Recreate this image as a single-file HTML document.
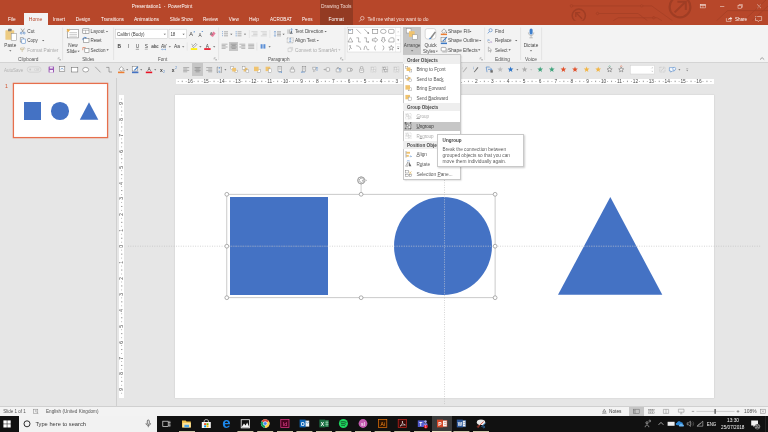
<!DOCTYPE html>
<html lang="en"><head><meta charset="utf-8"><title>Presentation1 - PowerPoint</title>
<style>
html,body{margin:0;padding:0;background:#e6e6e6;}
#app{position:relative;width:768px;height:432px;overflow:hidden;background:#e6e6e6;font-family:"Liberation Sans",sans-serif;}
#app div{position:absolute;box-sizing:border-box;}
#app span{position:absolute;white-space:pre;display:block;}
#app svg{position:absolute;left:0;top:0;width:768px;height:432px;overflow:visible;}
#app svg text{font-family:"Liberation Sans",sans-serif;}
u{text-decoration-thickness:0.3px;text-underline-offset:0.3px;text-decoration-color:rgba(90,90,90,0.55);}
</style></head><body><div id="app">

<section style="position:absolute;left:0;top:0;width:768px;height:432px;z-index:1;will-change:transform;">
<div style="left:0px;top:0px;width:768px;height:25px;background:#B7472A;"></div>
<div style="left:319.5px;top:0px;width:33.5px;height:25px;background:#933B23;"></div>
<div style="left:24px;top:13px;width:23.5px;height:12px;background:#F3F3F3;"></div>
<div style="left:0px;top:25px;width:768px;height:37px;background:#F3F3F3;"></div>
<div style="left:0px;top:62px;width:768px;height:15px;background:#E6E6E6;"></div>
<div style="left:0px;top:61.6px;width:768px;height:0.6px;background:#D4D4D4;"></div>
<div style="left:0px;top:77px;width:768px;height:330px;background:#E6E6E6;"></div>
<div style="left:116.3px;top:77.5px;width:0.7px;height:329px;background:#CFCFCF;"></div>
<div style="left:0px;top:406.4px;width:768px;height:0.6px;background:#D0D0D0;"></div>
<div style="left:0px;top:407px;width:768px;height:9px;background:#F3F3F3;"></div>
<div style="left:0px;top:416px;width:768px;height:16px;background:#111111;"></div>
<div style="left:19px;top:416px;width:138px;height:16px;background:#F2F2F2;"></div>
<div style="left:432px;top:416px;width:19.5px;height:16px;background:#3B3B3B;"></div>
<div style="left:175px;top:95px;width:539.3px;height:303px;background:#FFFFFF;box-shadow:0 0 0.8px 0.3px #c9c9c9;"></div>
<div style="left:176px;top:79px;width:538px;height:4.6px;background:#FFFFFF;"></div>
<div style="left:119.3px;top:95px;width:4.7px;height:302.5px;background:#FFFFFF;"></div>
<div style="left:13px;top:83px;width:95px;height:55px;background:#FFFFFF;border:1px solid #E76F4C;"></div>
<div style="left:230.3px;top:197.3px;width:97.7px;height:97.5px;background:#4472C4;"></div>
<div style="left:394px;top:197.2px;width:98px;height:98px;background:#4472C4;border-radius:50%;"></div>
<div style="left:24px;top:102.3px;width:16.8px;height:17.3px;background:#4472C4;"></div>
<div style="left:51.2px;top:102.2px;width:17.6px;height:17.6px;background:#4472C4;border-radius:50%;"></div>
<div style="left:229px;top:42px;width:9.4px;height:9.2px;background:#C6C6C6;"></div>
<div style="left:403px;top:27px;width:18.2px;height:27.2px;background:#C6C6C6;"></div>
<div style="left:192px;top:63px;width:11.4px;height:13.4px;background:#C6C6C6;"></div>
<div style="left:629px;top:407.4px;width:14.6px;height:8.6px;background:#C6C6C6;"></div>
<svg viewBox="0 0 768 432">
<rect x="13.4" y="83.4" width="94.2" height="54.2" fill="none" stroke="#E76F4C" stroke-width="1.3" rx="0" />
<polygon points="610.3,197 662.3,294.8 558,294.8" fill="#4472C4"/>
<polygon points="89,102.2 98.3,119.7 79.8,119.7" fill="#4472C4"/>
<line x1="128" y1="246.2" x2="760.5" y2="246.2" stroke="#BDBDBD" stroke-width="0.7" stroke-dasharray="0.9 1.5"/>
<line x1="444.5" y1="84" x2="444.5" y2="405" stroke="#BDBDBD" stroke-width="0.7" stroke-dasharray="0.9 1.5"/>
<line x1="230.3" y1="246.2" x2="328" y2="246.2" stroke="#8FA9DB" stroke-width="0.7" stroke-dasharray="0.9 1.5"/>
<line x1="394" y1="246.2" x2="492" y2="246.2" stroke="#8FA9DB" stroke-width="0.7" stroke-dasharray="0.9 1.5"/>
<line x1="584.5" y1="246.2" x2="636.5" y2="246.2" stroke="#8FA9DB" stroke-width="0.7" stroke-dasharray="0.9 1.5"/>
<line x1="444.5" y1="197.2" x2="444.5" y2="295.2" stroke="#8FA9DB" stroke-width="0.7" stroke-dasharray="0.9 1.5"/>
<rect x="226.8" y="194.3" width="268.3" height="103.4" fill="none" stroke="#BDBDBD" stroke-width="0.8" rx="0" />
<line x1="361.1" y1="184" x2="361.1" y2="194.3" stroke="#C4C4C4" stroke-width="0.8" />
<circle cx="226.8" cy="194.3" r="1.9" fill="#FFFFFF" stroke="#8C8C8C" stroke-width="0.7" />
<circle cx="361.1" cy="194.3" r="1.9" fill="#FFFFFF" stroke="#8C8C8C" stroke-width="0.7" />
<circle cx="495.1" cy="194.3" r="1.9" fill="#FFFFFF" stroke="#8C8C8C" stroke-width="0.7" />
<circle cx="226.8" cy="246.2" r="1.9" fill="#FFFFFF" stroke="#8C8C8C" stroke-width="0.7" />
<circle cx="495.1" cy="246.2" r="1.9" fill="#FFFFFF" stroke="#8C8C8C" stroke-width="0.7" />
<circle cx="226.8" cy="297.7" r="1.9" fill="#FFFFFF" stroke="#8C8C8C" stroke-width="0.7" />
<circle cx="361.1" cy="297.7" r="1.9" fill="#FFFFFF" stroke="#8C8C8C" stroke-width="0.7" />
<circle cx="495.1" cy="297.7" r="1.9" fill="#FFFFFF" stroke="#8C8C8C" stroke-width="0.7" />
<circle cx="361.2" cy="180.4" r="3.5" fill="#FFFFFF" stroke="#A0A0A0" stroke-width="0.8" />
<path d="M362.6 178.6A2.1 2.1 0 1 0 362.9 181.7" fill="none" stroke="#9A9A9A" stroke-width="0.75" />
<path d="M363.6 179L366.8 180.4L363.6 181.8Z" fill="#FFFFFF" stroke="#A8A8A8" stroke-width="0.55" />
<circle cx="361.2" cy="180.4" r="3.5" fill="none" stroke="#A0A0A0" stroke-width="0.8" />
<path d="M361.6 180.4L363.4 179.5V181.3Z" fill="#A8A8A8"  />
<line x1="194.175" y1="81.05000000000001" x2="194.175" y2="81.75" stroke="#555555" stroke-width="0.6" />
<line x1="198.15" y1="80.7" x2="198.15" y2="82.10000000000001" stroke="#555555" stroke-width="0.6" />
<line x1="202.12500000000003" y1="81.05000000000001" x2="202.12500000000003" y2="81.75" stroke="#555555" stroke-width="0.6" />
<line x1="210.07500000000002" y1="81.05000000000001" x2="210.07500000000002" y2="81.75" stroke="#555555" stroke-width="0.6" />
<line x1="214.05" y1="80.7" x2="214.05" y2="82.10000000000001" stroke="#555555" stroke-width="0.6" />
<line x1="218.02500000000003" y1="81.05000000000001" x2="218.02500000000003" y2="81.75" stroke="#555555" stroke-width="0.6" />
<line x1="225.97500000000002" y1="81.05000000000001" x2="225.97500000000002" y2="81.75" stroke="#555555" stroke-width="0.6" />
<line x1="229.95000000000002" y1="80.7" x2="229.95000000000002" y2="82.10000000000001" stroke="#555555" stroke-width="0.6" />
<line x1="233.92500000000004" y1="81.05000000000001" x2="233.92500000000004" y2="81.75" stroke="#555555" stroke-width="0.6" />
<line x1="241.875" y1="81.05000000000001" x2="241.875" y2="81.75" stroke="#555555" stroke-width="0.6" />
<line x1="245.85" y1="80.7" x2="245.85" y2="82.10000000000001" stroke="#555555" stroke-width="0.6" />
<line x1="249.82500000000002" y1="81.05000000000001" x2="249.82500000000002" y2="81.75" stroke="#555555" stroke-width="0.6" />
<line x1="257.77500000000003" y1="81.05000000000001" x2="257.77500000000003" y2="81.75" stroke="#555555" stroke-width="0.6" />
<line x1="261.75" y1="80.7" x2="261.75" y2="82.10000000000001" stroke="#555555" stroke-width="0.6" />
<line x1="265.725" y1="81.05000000000001" x2="265.725" y2="81.75" stroke="#555555" stroke-width="0.6" />
<line x1="273.67500000000007" y1="81.05000000000001" x2="273.67500000000007" y2="81.75" stroke="#555555" stroke-width="0.6" />
<line x1="277.65000000000003" y1="80.7" x2="277.65000000000003" y2="82.10000000000001" stroke="#555555" stroke-width="0.6" />
<line x1="281.62500000000006" y1="81.05000000000001" x2="281.62500000000006" y2="81.75" stroke="#555555" stroke-width="0.6" />
<line x1="289.57500000000005" y1="81.05000000000001" x2="289.57500000000005" y2="81.75" stroke="#555555" stroke-width="0.6" />
<line x1="293.55" y1="80.7" x2="293.55" y2="82.10000000000001" stroke="#555555" stroke-width="0.6" />
<line x1="297.52500000000003" y1="81.05000000000001" x2="297.52500000000003" y2="81.75" stroke="#555555" stroke-width="0.6" />
<line x1="305.475" y1="81.05000000000001" x2="305.475" y2="81.75" stroke="#555555" stroke-width="0.6" />
<line x1="309.45" y1="80.7" x2="309.45" y2="82.10000000000001" stroke="#555555" stroke-width="0.6" />
<line x1="313.425" y1="81.05000000000001" x2="313.425" y2="81.75" stroke="#555555" stroke-width="0.6" />
<line x1="321.37500000000006" y1="81.05000000000001" x2="321.37500000000006" y2="81.75" stroke="#555555" stroke-width="0.6" />
<line x1="325.35" y1="80.7" x2="325.35" y2="82.10000000000001" stroke="#555555" stroke-width="0.6" />
<line x1="329.32500000000005" y1="81.05000000000001" x2="329.32500000000005" y2="81.75" stroke="#555555" stroke-width="0.6" />
<line x1="337.27500000000003" y1="81.05000000000001" x2="337.27500000000003" y2="81.75" stroke="#555555" stroke-width="0.6" />
<line x1="341.25" y1="80.7" x2="341.25" y2="82.10000000000001" stroke="#555555" stroke-width="0.6" />
<line x1="345.225" y1="81.05000000000001" x2="345.225" y2="81.75" stroke="#555555" stroke-width="0.6" />
<line x1="353.17500000000007" y1="81.05000000000001" x2="353.17500000000007" y2="81.75" stroke="#555555" stroke-width="0.6" />
<line x1="357.15000000000003" y1="80.7" x2="357.15000000000003" y2="82.10000000000001" stroke="#555555" stroke-width="0.6" />
<line x1="361.12500000000006" y1="81.05000000000001" x2="361.12500000000006" y2="81.75" stroke="#555555" stroke-width="0.6" />
<line x1="369.07500000000005" y1="81.05000000000001" x2="369.07500000000005" y2="81.75" stroke="#555555" stroke-width="0.6" />
<line x1="373.05" y1="80.7" x2="373.05" y2="82.10000000000001" stroke="#555555" stroke-width="0.6" />
<line x1="377.02500000000003" y1="81.05000000000001" x2="377.02500000000003" y2="81.75" stroke="#555555" stroke-width="0.6" />
<line x1="384.975" y1="81.05000000000001" x2="384.975" y2="81.75" stroke="#555555" stroke-width="0.6" />
<line x1="388.95" y1="80.7" x2="388.95" y2="82.10000000000001" stroke="#555555" stroke-width="0.6" />
<line x1="392.925" y1="81.05000000000001" x2="392.925" y2="81.75" stroke="#555555" stroke-width="0.6" />
<line x1="400.87500000000006" y1="81.05000000000001" x2="400.87500000000006" y2="81.75" stroke="#555555" stroke-width="0.6" />
<line x1="404.85" y1="80.7" x2="404.85" y2="82.10000000000001" stroke="#555555" stroke-width="0.6" />
<line x1="408.82500000000005" y1="81.05000000000001" x2="408.82500000000005" y2="81.75" stroke="#555555" stroke-width="0.6" />
<line x1="416.77500000000003" y1="81.05000000000001" x2="416.77500000000003" y2="81.75" stroke="#555555" stroke-width="0.6" />
<line x1="420.75" y1="80.7" x2="420.75" y2="82.10000000000001" stroke="#555555" stroke-width="0.6" />
<line x1="424.725" y1="81.05000000000001" x2="424.725" y2="81.75" stroke="#555555" stroke-width="0.6" />
<line x1="432.67500000000007" y1="81.05000000000001" x2="432.67500000000007" y2="81.75" stroke="#555555" stroke-width="0.6" />
<line x1="436.65000000000003" y1="80.7" x2="436.65000000000003" y2="82.10000000000001" stroke="#555555" stroke-width="0.6" />
<line x1="440.62500000000006" y1="81.05000000000001" x2="440.62500000000006" y2="81.75" stroke="#555555" stroke-width="0.6" />
<line x1="448.57500000000005" y1="81.05000000000001" x2="448.57500000000005" y2="81.75" stroke="#555555" stroke-width="0.6" />
<line x1="452.55" y1="80.7" x2="452.55" y2="82.10000000000001" stroke="#555555" stroke-width="0.6" />
<line x1="456.52500000000003" y1="81.05000000000001" x2="456.52500000000003" y2="81.75" stroke="#555555" stroke-width="0.6" />
<line x1="464.475" y1="81.05000000000001" x2="464.475" y2="81.75" stroke="#555555" stroke-width="0.6" />
<line x1="468.45" y1="80.7" x2="468.45" y2="82.10000000000001" stroke="#555555" stroke-width="0.6" />
<line x1="472.425" y1="81.05000000000001" x2="472.425" y2="81.75" stroke="#555555" stroke-width="0.6" />
<line x1="480.37500000000006" y1="81.05000000000001" x2="480.37500000000006" y2="81.75" stroke="#555555" stroke-width="0.6" />
<line x1="484.35" y1="80.7" x2="484.35" y2="82.10000000000001" stroke="#555555" stroke-width="0.6" />
<line x1="488.32500000000005" y1="81.05000000000001" x2="488.32500000000005" y2="81.75" stroke="#555555" stroke-width="0.6" />
<line x1="496.27500000000003" y1="81.05000000000001" x2="496.27500000000003" y2="81.75" stroke="#555555" stroke-width="0.6" />
<line x1="500.25" y1="80.7" x2="500.25" y2="82.10000000000001" stroke="#555555" stroke-width="0.6" />
<line x1="504.225" y1="81.05000000000001" x2="504.225" y2="81.75" stroke="#555555" stroke-width="0.6" />
<line x1="512.1750000000001" y1="81.05000000000001" x2="512.1750000000001" y2="81.75" stroke="#555555" stroke-width="0.6" />
<line x1="516.1500000000001" y1="80.7" x2="516.1500000000001" y2="82.10000000000001" stroke="#555555" stroke-width="0.6" />
<line x1="520.125" y1="81.05000000000001" x2="520.125" y2="81.75" stroke="#555555" stroke-width="0.6" />
<line x1="528.075" y1="81.05000000000001" x2="528.075" y2="81.75" stroke="#555555" stroke-width="0.6" />
<line x1="532.0500000000001" y1="80.7" x2="532.0500000000001" y2="82.10000000000001" stroke="#555555" stroke-width="0.6" />
<line x1="536.025" y1="81.05000000000001" x2="536.025" y2="81.75" stroke="#555555" stroke-width="0.6" />
<line x1="543.975" y1="81.05000000000001" x2="543.975" y2="81.75" stroke="#555555" stroke-width="0.6" />
<line x1="547.95" y1="80.7" x2="547.95" y2="82.10000000000001" stroke="#555555" stroke-width="0.6" />
<line x1="551.925" y1="81.05000000000001" x2="551.925" y2="81.75" stroke="#555555" stroke-width="0.6" />
<line x1="559.875" y1="81.05000000000001" x2="559.875" y2="81.75" stroke="#555555" stroke-width="0.6" />
<line x1="563.85" y1="80.7" x2="563.85" y2="82.10000000000001" stroke="#555555" stroke-width="0.6" />
<line x1="567.8249999999999" y1="81.05000000000001" x2="567.8249999999999" y2="81.75" stroke="#555555" stroke-width="0.6" />
<line x1="575.7750000000001" y1="81.05000000000001" x2="575.7750000000001" y2="81.75" stroke="#555555" stroke-width="0.6" />
<line x1="579.7500000000001" y1="80.7" x2="579.7500000000001" y2="82.10000000000001" stroke="#555555" stroke-width="0.6" />
<line x1="583.725" y1="81.05000000000001" x2="583.725" y2="81.75" stroke="#555555" stroke-width="0.6" />
<line x1="591.6750000000001" y1="81.05000000000001" x2="591.6750000000001" y2="81.75" stroke="#555555" stroke-width="0.6" />
<line x1="595.6500000000001" y1="80.7" x2="595.6500000000001" y2="82.10000000000001" stroke="#555555" stroke-width="0.6" />
<line x1="599.625" y1="81.05000000000001" x2="599.625" y2="81.75" stroke="#555555" stroke-width="0.6" />
<line x1="607.575" y1="81.05000000000001" x2="607.575" y2="81.75" stroke="#555555" stroke-width="0.6" />
<line x1="611.5500000000001" y1="80.7" x2="611.5500000000001" y2="82.10000000000001" stroke="#555555" stroke-width="0.6" />
<line x1="615.525" y1="81.05000000000001" x2="615.525" y2="81.75" stroke="#555555" stroke-width="0.6" />
<line x1="623.475" y1="81.05000000000001" x2="623.475" y2="81.75" stroke="#555555" stroke-width="0.6" />
<line x1="627.45" y1="80.7" x2="627.45" y2="82.10000000000001" stroke="#555555" stroke-width="0.6" />
<line x1="631.425" y1="81.05000000000001" x2="631.425" y2="81.75" stroke="#555555" stroke-width="0.6" />
<line x1="639.3750000000001" y1="81.05000000000001" x2="639.3750000000001" y2="81.75" stroke="#555555" stroke-width="0.6" />
<line x1="643.3500000000001" y1="80.7" x2="643.3500000000001" y2="82.10000000000001" stroke="#555555" stroke-width="0.6" />
<line x1="647.325" y1="81.05000000000001" x2="647.325" y2="81.75" stroke="#555555" stroke-width="0.6" />
<line x1="655.2750000000001" y1="81.05000000000001" x2="655.2750000000001" y2="81.75" stroke="#555555" stroke-width="0.6" />
<line x1="659.2500000000001" y1="80.7" x2="659.2500000000001" y2="82.10000000000001" stroke="#555555" stroke-width="0.6" />
<line x1="663.225" y1="81.05000000000001" x2="663.225" y2="81.75" stroke="#555555" stroke-width="0.6" />
<line x1="671.1750000000001" y1="81.05000000000001" x2="671.1750000000001" y2="81.75" stroke="#555555" stroke-width="0.6" />
<line x1="675.1500000000001" y1="80.7" x2="675.1500000000001" y2="82.10000000000001" stroke="#555555" stroke-width="0.6" />
<line x1="679.125" y1="81.05000000000001" x2="679.125" y2="81.75" stroke="#555555" stroke-width="0.6" />
<line x1="687.075" y1="81.05000000000001" x2="687.075" y2="81.75" stroke="#555555" stroke-width="0.6" />
<line x1="691.0500000000001" y1="80.7" x2="691.0500000000001" y2="82.10000000000001" stroke="#555555" stroke-width="0.6" />
<line x1="695.025" y1="81.05000000000001" x2="695.025" y2="81.75" stroke="#555555" stroke-width="0.6" />
<line x1="702.975" y1="81.05000000000001" x2="702.975" y2="81.75" stroke="#555555" stroke-width="0.6" />
<line x1="706.95" y1="80.7" x2="706.95" y2="82.10000000000001" stroke="#555555" stroke-width="0.6" />
<line x1="710.925" y1="81.05000000000001" x2="710.925" y2="81.75" stroke="#555555" stroke-width="0.6" />
<line x1="121.35000000000001" y1="107.07499999999999" x2="122.05" y2="107.07499999999999" stroke="#555555" stroke-width="0.6" />
<line x1="121.0" y1="111.05" x2="122.4" y2="111.05" stroke="#555555" stroke-width="0.6" />
<line x1="121.35000000000001" y1="115.02499999999999" x2="122.05" y2="115.02499999999999" stroke="#555555" stroke-width="0.6" />
<line x1="121.35000000000001" y1="122.97499999999998" x2="122.05" y2="122.97499999999998" stroke="#555555" stroke-width="0.6" />
<line x1="121.0" y1="126.94999999999999" x2="122.4" y2="126.94999999999999" stroke="#555555" stroke-width="0.6" />
<line x1="121.35000000000001" y1="130.92499999999998" x2="122.05" y2="130.92499999999998" stroke="#555555" stroke-width="0.6" />
<line x1="121.35000000000001" y1="138.87499999999997" x2="122.05" y2="138.87499999999997" stroke="#555555" stroke-width="0.6" />
<line x1="121.0" y1="142.84999999999997" x2="122.4" y2="142.84999999999997" stroke="#555555" stroke-width="0.6" />
<line x1="121.35000000000001" y1="146.825" x2="122.05" y2="146.825" stroke="#555555" stroke-width="0.6" />
<line x1="121.35000000000001" y1="154.77499999999998" x2="122.05" y2="154.77499999999998" stroke="#555555" stroke-width="0.6" />
<line x1="121.0" y1="158.74999999999997" x2="122.4" y2="158.74999999999997" stroke="#555555" stroke-width="0.6" />
<line x1="121.35000000000001" y1="162.725" x2="122.05" y2="162.725" stroke="#555555" stroke-width="0.6" />
<line x1="121.35000000000001" y1="170.67499999999998" x2="122.05" y2="170.67499999999998" stroke="#555555" stroke-width="0.6" />
<line x1="121.0" y1="174.64999999999998" x2="122.4" y2="174.64999999999998" stroke="#555555" stroke-width="0.6" />
<line x1="121.35000000000001" y1="178.625" x2="122.05" y2="178.625" stroke="#555555" stroke-width="0.6" />
<line x1="121.35000000000001" y1="186.575" x2="122.05" y2="186.575" stroke="#555555" stroke-width="0.6" />
<line x1="121.0" y1="190.54999999999998" x2="122.4" y2="190.54999999999998" stroke="#555555" stroke-width="0.6" />
<line x1="121.35000000000001" y1="194.525" x2="122.05" y2="194.525" stroke="#555555" stroke-width="0.6" />
<line x1="121.35000000000001" y1="202.475" x2="122.05" y2="202.475" stroke="#555555" stroke-width="0.6" />
<line x1="121.0" y1="206.45" x2="122.4" y2="206.45" stroke="#555555" stroke-width="0.6" />
<line x1="121.35000000000001" y1="210.425" x2="122.05" y2="210.425" stroke="#555555" stroke-width="0.6" />
<line x1="121.35000000000001" y1="218.37499999999997" x2="122.05" y2="218.37499999999997" stroke="#555555" stroke-width="0.6" />
<line x1="121.0" y1="222.34999999999997" x2="122.4" y2="222.34999999999997" stroke="#555555" stroke-width="0.6" />
<line x1="121.35000000000001" y1="226.325" x2="122.05" y2="226.325" stroke="#555555" stroke-width="0.6" />
<line x1="121.35000000000001" y1="234.27499999999998" x2="122.05" y2="234.27499999999998" stroke="#555555" stroke-width="0.6" />
<line x1="121.0" y1="238.24999999999997" x2="122.4" y2="238.24999999999997" stroke="#555555" stroke-width="0.6" />
<line x1="121.35000000000001" y1="242.225" x2="122.05" y2="242.225" stroke="#555555" stroke-width="0.6" />
<line x1="121.35000000000001" y1="250.17499999999998" x2="122.05" y2="250.17499999999998" stroke="#555555" stroke-width="0.6" />
<line x1="121.0" y1="254.14999999999998" x2="122.4" y2="254.14999999999998" stroke="#555555" stroke-width="0.6" />
<line x1="121.35000000000001" y1="258.125" x2="122.05" y2="258.125" stroke="#555555" stroke-width="0.6" />
<line x1="121.35000000000001" y1="266.075" x2="122.05" y2="266.075" stroke="#555555" stroke-width="0.6" />
<line x1="121.0" y1="270.04999999999995" x2="122.4" y2="270.04999999999995" stroke="#555555" stroke-width="0.6" />
<line x1="121.35000000000001" y1="274.025" x2="122.05" y2="274.025" stroke="#555555" stroke-width="0.6" />
<line x1="121.35000000000001" y1="281.975" x2="122.05" y2="281.975" stroke="#555555" stroke-width="0.6" />
<line x1="121.0" y1="285.95" x2="122.4" y2="285.95" stroke="#555555" stroke-width="0.6" />
<line x1="121.35000000000001" y1="289.925" x2="122.05" y2="289.925" stroke="#555555" stroke-width="0.6" />
<line x1="121.35000000000001" y1="297.875" x2="122.05" y2="297.875" stroke="#555555" stroke-width="0.6" />
<line x1="121.0" y1="301.84999999999997" x2="122.4" y2="301.84999999999997" stroke="#555555" stroke-width="0.6" />
<line x1="121.35000000000001" y1="305.825" x2="122.05" y2="305.825" stroke="#555555" stroke-width="0.6" />
<line x1="121.35000000000001" y1="313.77500000000003" x2="122.05" y2="313.77500000000003" stroke="#555555" stroke-width="0.6" />
<line x1="121.0" y1="317.75" x2="122.4" y2="317.75" stroke="#555555" stroke-width="0.6" />
<line x1="121.35000000000001" y1="321.725" x2="122.05" y2="321.725" stroke="#555555" stroke-width="0.6" />
<line x1="121.35000000000001" y1="329.675" x2="122.05" y2="329.675" stroke="#555555" stroke-width="0.6" />
<line x1="121.0" y1="333.65" x2="122.4" y2="333.65" stroke="#555555" stroke-width="0.6" />
<line x1="121.35000000000001" y1="337.625" x2="122.05" y2="337.625" stroke="#555555" stroke-width="0.6" />
<line x1="121.35000000000001" y1="345.57500000000005" x2="122.05" y2="345.57500000000005" stroke="#555555" stroke-width="0.6" />
<line x1="121.0" y1="349.55" x2="122.4" y2="349.55" stroke="#555555" stroke-width="0.6" />
<line x1="121.35000000000001" y1="353.52500000000003" x2="122.05" y2="353.52500000000003" stroke="#555555" stroke-width="0.6" />
<line x1="121.35000000000001" y1="361.475" x2="122.05" y2="361.475" stroke="#555555" stroke-width="0.6" />
<line x1="121.0" y1="365.45" x2="122.4" y2="365.45" stroke="#555555" stroke-width="0.6" />
<line x1="121.35000000000001" y1="369.425" x2="122.05" y2="369.425" stroke="#555555" stroke-width="0.6" />
<line x1="121.35000000000001" y1="377.375" x2="122.05" y2="377.375" stroke="#555555" stroke-width="0.6" />
<line x1="121.0" y1="381.34999999999997" x2="122.4" y2="381.34999999999997" stroke="#555555" stroke-width="0.6" />
<line x1="121.35000000000001" y1="385.325" x2="122.05" y2="385.325" stroke="#555555" stroke-width="0.6" />
<line x1="121.35000000000001" y1="393.275" x2="122.05" y2="393.275" stroke="#555555" stroke-width="0.6" />
<line x1="121.35000000000001" y1="99.12499999999999" x2="122.05" y2="99.12499999999999" stroke="#555555" stroke-width="0.6" />
<line x1="178.275" y1="81.05000000000001" x2="178.275" y2="81.75" stroke="#555555" stroke-width="0.6" />
<line x1="182.25" y1="80.7" x2="182.25" y2="82.10000000000001" stroke="#555555" stroke-width="0.6" />
<line x1="186.22500000000002" y1="81.05000000000001" x2="186.22500000000002" y2="81.75" stroke="#555555" stroke-width="0.6" />
<circle cx="362.3" cy="18.2" r="1.8" fill="none" stroke="#F6E3DD" stroke-width="0.6" />
<line x1="361" y1="19.6" x2="359.2" y2="21.6" stroke="#F6E3DD" stroke-width="0.7" />
<path d="M726.4 18.2L726.4 21.4L731 21.4L731 19.6" fill="none" stroke="#F6E3DD" stroke-width="0.55" />
<path d="M728 20.2C728.2 18.6 729.2 17.8 730.4 17.8L730.4 16.8L732.3 18.4L730.4 20L730.4 19C729.4 19 728.6 19.4 728 20.2Z" fill="#F6E3DD"  />
<path d="M755.5 16.5H761.6V20.5H759.3L758.4 21.7L757.6 20.5H755.5Z" fill="none" stroke="#F6E3DD" stroke-width="0.55" />
<rect x="700.2" y="4.6" width="5.4" height="3.3" fill="none" stroke="#F6E3DD" stroke-width="0.5" rx="0" />
<rect x="700.2" y="4.6" width="5.4" height="1.0" fill="#F6E3DD"  rx="0" />
<line x1="702.9" y1="5.6" x2="702.9" y2="7.9" stroke="#F6E3DD" stroke-width="0.4" />
<line x1="720" y1="6.5" x2="724.3" y2="6.5" stroke="#F6E3DD" stroke-width="0.55" />
<rect x="738" y="5.4" width="3.4" height="2.8" fill="none" stroke="#F6E3DD" stroke-width="0.5" rx="0" />
<path d="M739 5.4V4.5H742.4V7.3H741.4" fill="none" stroke="#F6E3DD" stroke-width="0.5" />
<line x1="757.2" y1="4.4" x2="761" y2="8.2" stroke="#F6E3DD" stroke-width="0.55" />
<line x1="761" y1="4.4" x2="757.2" y2="8.2" stroke="#F6E3DD" stroke-width="0.55" />
<g clip-path="url(#tbclip)"><defs><clipPath id="tbclip"><rect x="560" y="0" width="208" height="20.7"/></clipPath></defs>
<circle cx="571.5" cy="5.9" r="1.3" fill="none" stroke="#A33F25" stroke-width="0.7" />
<path d="M572.8 5.9H640.5M642.9 5.9H651.7L672.5 20.8" fill="none" stroke="#A33F25" stroke-width="0.7" />
<circle cx="641.7" cy="5.9" r="1.2" fill="none" stroke="#A33F25" stroke-width="0.7" />
<circle cx="597.5" cy="13.5" r="1.2" fill="none" stroke="#A33F25" stroke-width="0.7" />
<path d="M598.7 13.5H638L647.5 20.8" fill="none" stroke="#A33F25" stroke-width="0.7" />
<path d="M613 20.8L618.3 17.7H652.6M654.8 17.7H657L662 20.8" fill="none" stroke="#A33F25" stroke-width="0.7" />
<circle cx="653.7" cy="17.7" r="1.1" fill="none" stroke="#A33F25" stroke-width="0.7" />
<circle cx="578.8" cy="15.6" r="6.6" fill="none" stroke="#A03D24" stroke-width="1.5" />
<path d="M582 18.8L576 12.8M575.8 17V12.6H580.2" fill="none" stroke="#A03D24" stroke-width="1.3" />
<circle cx="680" cy="6.9" r="10.4" fill="none" stroke="#A03D24" stroke-width="2.2" />
<path d="M674.6 12.4L685.6 1.8M677.4 1.7H685.8V10" fill="none" stroke="#A03D24" stroke-width="2.0" />
<path d="M716.5 20.8L727.5 10.6H768" fill="none" stroke="#A33F25" stroke-width="0.7" />
<path d="M743.5 20.8L766 0" fill="none" stroke="#A33F25" stroke-width="0.7" />
<path d="M752 20.8L768 6" fill="none" stroke="#A33F25" stroke-width="0.7" />
</g>
<line x1="62.6" y1="27.5" x2="62.6" y2="60" stroke="#DADADA" stroke-width="0.6" />
<line x1="113.6" y1="27.5" x2="113.6" y2="60" stroke="#DADADA" stroke-width="0.6" />
<line x1="218.6" y1="27.5" x2="218.6" y2="60" stroke="#DADADA" stroke-width="0.6" />
<line x1="345" y1="27.5" x2="345" y2="60" stroke="#DADADA" stroke-width="0.6" />
<line x1="484.6" y1="27.5" x2="484.6" y2="60" stroke="#DADADA" stroke-width="0.6" />
<line x1="520.6" y1="27.5" x2="520.6" y2="60" stroke="#DADADA" stroke-width="0.6" />
<line x1="541.6" y1="27.5" x2="541.6" y2="60" stroke="#DADADA" stroke-width="0.6" />
<path d="M58.099999999999994 59.4V57.8H59.699999999999996" fill="none" stroke="#888" stroke-width="0.45" />
<path d="M59.0 58.699999999999996L60.5 60.199999999999996M60.5 59.099999999999994V60.199999999999996H59.4" fill="none" stroke="#888" stroke-width="0.45" />
<path d="M214.10000000000002 59.4V57.8H215.70000000000002" fill="none" stroke="#888" stroke-width="0.45" />
<path d="M215.0 58.699999999999996L216.5 60.199999999999996M216.5 59.099999999999994V60.199999999999996H215.4" fill="none" stroke="#888" stroke-width="0.45" />
<path d="M340.5 59.4V57.8H342.09999999999997" fill="none" stroke="#888" stroke-width="0.45" />
<path d="M341.4 58.699999999999996L342.9 60.199999999999996M342.9 59.099999999999994V60.199999999999996H341.8" fill="none" stroke="#888" stroke-width="0.45" />
<path d="M480.0 59.4V57.8H481.59999999999997" fill="none" stroke="#888" stroke-width="0.45" />
<path d="M480.9 58.699999999999996L482.4 60.199999999999996M482.4 59.099999999999994V60.199999999999996H481.3" fill="none" stroke="#888" stroke-width="0.45" />
<path d="M760 59.6L762.1 57.6L764.2 59.6" fill="none" stroke="#666" stroke-width="0.6" />
<rect x="5.4" y="30.2" width="8.8" height="9.6" fill="#EDCB82"  rx="0.6" />
<rect x="8.0" y="28.8" width="3.6" height="2.4" fill="#7A7A7A"  rx="0.5" />
<rect x="11.2" y="33.6" width="5.2" height="7.0" fill="#FFFFFF" stroke="#8A8A8A" stroke-width="0.5" rx="0" />
<path d="M9.18 50.14L11.43 50.14L10.3 51.43Z" fill="#606060"  />
<path d="M21 28.6L23.6 32.4M24.4 28.6L21.8 32.4" fill="none" stroke="#6A6A6A" stroke-width="0.55" />
<circle cx="21.2" cy="33.1" r="0.95" fill="none" stroke="#3B78C4" stroke-width="0.55" />
<circle cx="24.2" cy="33.1" r="0.95" fill="none" stroke="#3B78C4" stroke-width="0.55" />
<rect x="20.2" y="37.8" width="3.4" height="4.2" fill="#FFFFFF" stroke="#6A6A6A" stroke-width="0.5" rx="0" />
<rect x="21.8" y="39.0" width="3.4" height="4.2" fill="#FFFFFF" stroke="#3B78C4" stroke-width="0.5" rx="0" />
<path d="M42.08 40.04L44.33 40.04L43.2 41.33Z" fill="#606060"  />
<path d="M20.6 48L23.8 48L23.8 49.6L20.6 49.6ZM22.2 49.6V52" fill="none" stroke="#C9B98F" stroke-width="0.7" />
<path d="M23.8 47.2L25.4 48.6" fill="none" stroke="#BDBDBD" stroke-width="0.8" />
<rect x="67.6" y="29.3" width="11.0" height="8.6" fill="#FFFFFF" stroke="#7A7A7A" stroke-width="0.55" rx="0" />
<line x1="69.4" y1="32.6" x2="77" y2="32.6" stroke="#9A9A9A" stroke-width="0.5" />
<line x1="69.4" y1="34.4" x2="77" y2="34.4" stroke="#9A9A9A" stroke-width="0.5" />
<line x1="69.4" y1="36.2" x2="77" y2="36.2" stroke="#9A9A9A" stroke-width="0.5" />
<path d="M67.2 28.2L68.2 29.4L69.4 28.4L69 30L70.4 30.6L68.9 31L68.7 32.4L67.8 31.2L66.4 31.6L67.2 30.3L66.4 29.2L67.8 29.4Z" fill="#F2B54A"  />
<path d="M77.47 50.64L79.72 50.64L78.6 51.93Z" fill="#606060"  />
<rect x="82.8" y="28.8" width="6.2" height="4.8" fill="#FFFFFF" stroke="#6A6A6A" stroke-width="0.5" rx="0" />
<line x1="82.8" y1="30.3" x2="89" y2="30.3" stroke="#6A6A6A" stroke-width="0.4" />
<line x1="85.6" y1="30.3" x2="85.6" y2="33.6" stroke="#6A6A6A" stroke-width="0.4" />
<path d="M105.88 30.94L108.12 30.94L107 32.23Z" fill="#606060"  />
<rect x="83.6" y="38.6" width="5.4" height="4.0" fill="#FFFFFF" stroke="#6A6A6A" stroke-width="0.5" rx="0" />
<path d="M83 40.2A2 2 0 0 1 86.2 37.9" fill="none" stroke="#3B78C4" stroke-width="0.7" />
<path d="M85.6 36.9L86.9 38.1L85.2 38.6Z" fill="#3B78C4"  />
<rect x="84.8" y="48.6" width="4.2" height="3.8" fill="#FFFFFF" stroke="#6A6A6A" stroke-width="0.5" rx="0" />
<path d="M82.8 47.5H85.6M82.8 47.5V50.2" fill="none" stroke="#D9643A" stroke-width="0.6" />
<path d="M106.47 49.34L108.72 49.34L107.6 50.63Z" fill="#606060"  />
<rect x="115.6" y="29.2" width="52" height="9.4" fill="#FFFFFF" stroke="#C6C6C6" stroke-width="0.5" rx="0" />
<path d="M163.68 33.64L165.93 33.64L164.8 34.93Z" fill="#606060"  />
<rect x="169" y="29.2" width="17.6" height="9.4" fill="#FFFFFF" stroke="#C6C6C6" stroke-width="0.5" rx="0" />
<path d="M182.47 33.64L184.72 33.64L183.6 34.93Z" fill="#606060"  />
<path d="M193.3 32.2L194.2 31L195.1 32.2Z" fill="#3B78C4"  />
<path d="M201.4 30.9L202.3 32.1L203.2 30.9Z" fill="#3B78C4"  />
<path d="M210.4 35.6L213.4 31.6L215.6 33.2L212.8 37Z" fill="#E77C9A"  />
<line x1="135.8" y1="49.3" x2="139" y2="49.3" stroke="#444" stroke-width="0.45" />
<line x1="144.8" y1="49.2" x2="147.8" y2="49.2" stroke="#555" stroke-width="0.4" />
<line x1="151.4" y1="46.9" x2="158.2" y2="46.9" stroke="#555" stroke-width="0.4" />
<path d="M161.6 49.4H166M161.6 49.4L162.4 48.8M161.6 49.4L162.4 50M166 49.4L165.2 48.8M166 49.4L165.2 50" fill="none" stroke="#3B78C4" stroke-width="0.4" />
<path d="M168.68 46.14L170.93 46.14L169.8 47.43Z" fill="#606060"  />
<path d="M182.07 46.14L184.32 46.14L183.2 47.43Z" fill="#606060"  />
<line x1="187.2" y1="42.5" x2="187.2" y2="50.5" stroke="#DADADA" stroke-width="0.5" />
<path d="M192.4 46.6L195.6 43.4L196.8 44.6L193.8 47.6Z" fill="none" stroke="#666" stroke-width="0.5" />
<path d="M191.4 44.2L193 45.4" fill="none" stroke="#666" stroke-width="0.5" />
<rect x="190.8" y="48.2" width="6.4" height="1.7" fill="#FFEE00"  rx="0" />
<path d="M199.28 46.14L201.53 46.14L200.4 47.43Z" fill="#606060"  />
<rect x="204.2" y="48.2" width="6.4" height="1.7" fill="#E81123"  rx="0" />
<path d="M213.07 46.14L215.32 46.14L214.2 47.43Z" fill="#606060"  />
<circle cx="222.6" cy="31.799999999999997" r="0.45" fill="#3B78C4"  />
<line x1="224.0" y1="31.799999999999997" x2="228" y2="31.799999999999997" stroke="#6A6A6A" stroke-width="0.5" />
<circle cx="222.6" cy="33.8" r="0.45" fill="#3B78C4"  />
<line x1="224.0" y1="33.8" x2="228" y2="33.8" stroke="#6A6A6A" stroke-width="0.5" />
<circle cx="222.6" cy="35.8" r="0.45" fill="#3B78C4"  />
<line x1="224.0" y1="35.8" x2="228" y2="35.8" stroke="#6A6A6A" stroke-width="0.5" />
<path d="M230.18 33.64L232.43 33.64L231.3 34.93Z" fill="#606060"  />
<line x1="235.7" y1="31.799999999999997" x2="236.6" y2="31.799999999999997" stroke="#3B78C4" stroke-width="0.8" />
<line x1="237.5" y1="31.799999999999997" x2="241.5" y2="31.799999999999997" stroke="#6A6A6A" stroke-width="0.5" />
<line x1="235.7" y1="33.8" x2="236.6" y2="33.8" stroke="#3B78C4" stroke-width="0.8" />
<line x1="237.5" y1="33.8" x2="241.5" y2="33.8" stroke="#6A6A6A" stroke-width="0.5" />
<line x1="235.7" y1="35.8" x2="236.6" y2="35.8" stroke="#3B78C4" stroke-width="0.8" />
<line x1="237.5" y1="35.8" x2="241.5" y2="35.8" stroke="#6A6A6A" stroke-width="0.5" />
<path d="M243.88 33.64L246.12 33.64L245 34.93Z" fill="#606060"  />
<line x1="249.4" y1="30" x2="249.4" y2="38" stroke="#DADADA" stroke-width="0.5" />
<line x1="251.5" y1="31.699999999999996" x2="257.5" y2="31.699999999999996" stroke="#B4B4B4" stroke-width="0.45" />
<line x1="253.1" y1="33.099999999999994" x2="257.5" y2="33.099999999999994" stroke="#B4B4B4" stroke-width="0.45" />
<line x1="253.1" y1="34.49999999999999" x2="257.5" y2="34.49999999999999" stroke="#B4B4B4" stroke-width="0.45" />
<line x1="251.5" y1="35.89999999999999" x2="257.5" y2="35.89999999999999" stroke="#B4B4B4" stroke-width="0.45" />
<line x1="260.8" y1="31.699999999999996" x2="266.8" y2="31.699999999999996" stroke="#B4B4B4" stroke-width="0.45" />
<line x1="262.40000000000003" y1="33.099999999999994" x2="266.8" y2="33.099999999999994" stroke="#B4B4B4" stroke-width="0.45" />
<line x1="262.40000000000003" y1="34.49999999999999" x2="266.8" y2="34.49999999999999" stroke="#B4B4B4" stroke-width="0.45" />
<line x1="260.8" y1="35.89999999999999" x2="266.8" y2="35.89999999999999" stroke="#B4B4B4" stroke-width="0.45" />
<line x1="269.8" y1="30" x2="269.8" y2="38" stroke="#DADADA" stroke-width="0.5" />
<line x1="277" y1="31.7" x2="281" y2="31.7" stroke="#6A6A6A" stroke-width="0.45" />
<line x1="277" y1="33.1" x2="281" y2="33.1" stroke="#6A6A6A" stroke-width="0.45" />
<line x1="277" y1="34.5" x2="281" y2="34.5" stroke="#6A6A6A" stroke-width="0.45" />
<line x1="277" y1="35.9" x2="281" y2="35.9" stroke="#6A6A6A" stroke-width="0.45" />
<path d="M275 31.2V36.4M274.2 32.2L275 31.2L275.8 32.2M274.2 35.4L275 36.4L275.8 35.4" fill="none" stroke="#3B78C4" stroke-width="0.45" />
<path d="M282.48 33.64L284.73 33.64L283.6 34.93Z" fill="#606060"  />
<line x1="221.6" y1="44.199999999999996" x2="227.6" y2="44.199999999999996" stroke="#6A6A6A" stroke-width="0.45" />
<line x1="221.6" y1="45.599999999999994" x2="225.6" y2="45.599999999999994" stroke="#6A6A6A" stroke-width="0.45" />
<line x1="221.6" y1="46.99999999999999" x2="227.6" y2="46.99999999999999" stroke="#6A6A6A" stroke-width="0.45" />
<line x1="221.6" y1="48.39999999999999" x2="225.6" y2="48.39999999999999" stroke="#6A6A6A" stroke-width="0.45" />
<line x1="230.7" y1="44.199999999999996" x2="236.7" y2="44.199999999999996" stroke="#6A6A6A" stroke-width="0.45" />
<line x1="231.7" y1="45.599999999999994" x2="235.7" y2="45.599999999999994" stroke="#6A6A6A" stroke-width="0.45" />
<line x1="230.7" y1="46.99999999999999" x2="236.7" y2="46.99999999999999" stroke="#6A6A6A" stroke-width="0.45" />
<line x1="231.7" y1="48.39999999999999" x2="235.7" y2="48.39999999999999" stroke="#6A6A6A" stroke-width="0.45" />
<line x1="239.3" y1="44.199999999999996" x2="245.3" y2="44.199999999999996" stroke="#6A6A6A" stroke-width="0.45" />
<line x1="241.3" y1="45.599999999999994" x2="245.3" y2="45.599999999999994" stroke="#6A6A6A" stroke-width="0.45" />
<line x1="239.3" y1="46.99999999999999" x2="245.3" y2="46.99999999999999" stroke="#6A6A6A" stroke-width="0.45" />
<line x1="241.3" y1="48.39999999999999" x2="245.3" y2="48.39999999999999" stroke="#6A6A6A" stroke-width="0.45" />
<line x1="248.2" y1="44.199999999999996" x2="254.2" y2="44.199999999999996" stroke="#6A6A6A" stroke-width="0.45" />
<line x1="248.2" y1="45.599999999999994" x2="254.2" y2="45.599999999999994" stroke="#6A6A6A" stroke-width="0.45" />
<line x1="248.2" y1="46.99999999999999" x2="254.2" y2="46.99999999999999" stroke="#6A6A6A" stroke-width="0.45" />
<line x1="248.2" y1="48.39999999999999" x2="254.2" y2="48.39999999999999" stroke="#6A6A6A" stroke-width="0.45" />
<line x1="256.8" y1="42.5" x2="256.8" y2="50.5" stroke="#DADADA" stroke-width="0.5" />
<rect x="260.6" y="44.2" width="2.0" height="4.4" fill="#5B8FD6"  rx="0" />
<rect x="263.4" y="44.2" width="2.0" height="4.4" fill="#5B8FD6"  rx="0" />
<path d="M268.48 46.14L270.73 46.14L269.6 47.43Z" fill="#606060"  />
<path d="M288 33.8V29.4M289.6 33.8V29.4" fill="none" stroke="#6A6A6A" stroke-width="0.45" />
<path d="M291.6 33.8V28.6M290.8 29.6L291.6 28.6L292.4 29.6" fill="none" stroke="#3B78C4" stroke-width="0.5" />
<path d="M324.48 30.94L326.73 30.94L325.6 32.23Z" fill="#606060"  />
<rect x="287.2" y="37.8" width="6" height="5" fill="none" stroke="#6A6A6A" stroke-width="0.45" rx="0" stroke-dasharray="0.8 0.6"/>
<path d="M290.2 38.4V42.2M289.4 39.3L290.2 38.4L291 39.3M289.4 41.3L290.2 42.2L291 41.3" fill="none" stroke="#3B78C4" stroke-width="0.45" />
<path d="M316.68 40.04L318.93 40.04L317.8 41.33Z" fill="#606060"  />
<path d="M288 48.2H291.4V51.6H288ZM289.4 47.4H292.6V50.6" fill="none" stroke="#BDBDBD" stroke-width="0.5" />
<path d="M338.27 49.34L340.52 49.34L339.4 50.63Z" fill="#BBB"  />
<rect x="347.2" y="27.6" width="53.6" height="24.4" fill="#FFFFFF" stroke="#D0D0D0" stroke-width="0.5" rx="0" />
<line x1="395.6" y1="27.6" x2="395.6" y2="52" stroke="#D6D6D6" stroke-width="0.4" />
<line x1="395.6" y1="35.7" x2="400.8" y2="35.7" stroke="#D6D6D6" stroke-width="0.4" />
<line x1="395.6" y1="43.8" x2="400.8" y2="43.8" stroke="#D6D6D6" stroke-width="0.4" />
<path d="M397.2 32.2L398.2 31L399.2 32.2Z" fill="#C8C8C8"  />
<path d="M397.20 39.50L399.20 39.50L398.2 40.65Z" fill="#606060"  />
<path d="M397.20 48.10L399.20 48.10L398.2 49.25Z" fill="#606060"  />
<line x1="397.1" y1="46.8" x2="399.3" y2="46.8" stroke="#666" stroke-width="0.4" />
<rect x="348.4" y="29.2" width="4.4" height="4.4" fill="#FFFFFF" stroke="#5E5E5E" stroke-width="0.45" rx="0" />
<line x1="349.2" y1="30.4" x2="351" y2="30.4" stroke="#3B78C4" stroke-width="0.5" />
<line x1="356.4" y1="29.2" x2="360.8" y2="33.6" stroke="#5E5E5E" stroke-width="0.45" />
<line x1="364.4" y1="29.2" x2="368.8" y2="33.6" stroke="#5E5E5E" stroke-width="0.45" />
<path d="M368.9 33.7L367.2 33.3L368.5 32Z" fill="#5E5E5E"  />
<rect x="372.4" y="29.4" width="5.4" height="4.0" fill="none" stroke="#5E5E5E" stroke-width="0.45" rx="0" />
<ellipse cx="383.3" cy="31.4" rx="2.8" ry="2.1" fill="none" stroke="#5E5E5E" stroke-width="0.45"/>
<rect x="388.6" y="29.4" width="5.4" height="4.0" fill="none" stroke="#5E5E5E" stroke-width="0.45" rx="1" />
<path d="M350.4 37.6L352.8 42H348Z" fill="none" stroke="#5E5E5E" stroke-width="0.45" />
<path d="M356.4 37.8H358.6V42H360.8" fill="none" stroke="#5E5E5E" stroke-width="0.45" />
<path d="M364.2 37.8H366.4V42H368.4" fill="none" stroke="#5E5E5E" stroke-width="0.45" />
<path d="M369.2 42L367.9 41.2V42.8Z" fill="#5E5E5E"  />
<path d="M372.4 38.9H375.2V37.6L377.8 39.9L375.2 42.2V40.9H372.4Z" fill="none" stroke="#5E5E5E" stroke-width="0.45" />
<path d="M382.2 37.6H384.4V40.2H385.6L383.3 42.4L381 40.2H382.2Z" fill="none" stroke="#5E5E5E" stroke-width="0.45" />
<path d="M388.8 42V39.6L390.8 37.8H393.4L394 39V42Z" fill="none" stroke="#5E5E5E" stroke-width="0.45" />
<path d="M348.8 46L350.6 45.6L350.2 47.2L351.8 48.8M350.4 47.4L349.2 50.2" fill="none" stroke="#5E5E5E" stroke-width="0.45" />
<path d="M356.2 45.8C359 45.8 360.6 47.2 360.8 50" fill="none" stroke="#5E5E5E" stroke-width="0.45" />
<path d="M364 50C364.6 45 366 45 366.6 47.6C367.2 50.4 368.4 50.6 369 49" fill="none" stroke="#5E5E5E" stroke-width="0.45" />
<path d="M375.8 45.6C374.4 45.8 375.4 47.6 374.2 47.9C375.4 48.2 374.4 50 375.8 50.2" fill="none" stroke="#5E5E5E" stroke-width="0.45" />
<path d="M382.6 45.6C384 45.8 383 47.6 384.2 47.9C383 48.2 384 50 382.6 50.2" fill="none" stroke="#5E5E5E" stroke-width="0.45" />
<polygon points="391.30,45.30 391.97,47.08 393.87,47.17 392.38,48.35 392.89,50.18 391.30,49.13 389.71,50.18 390.22,48.35 388.73,47.17 390.63,47.08" fill="none" stroke="#5E5E5E" stroke-width="0.45"/>
<rect x="406.4" y="28.6" width="4.6" height="4.4" fill="#FFFFFF" stroke="#8A8A8A" stroke-width="0.45" rx="0" />
<rect x="409" y="31.2" width="5.6" height="5.6" fill="#F0C36E"  rx="0" />
<rect x="412.6" y="34.8" width="4.6" height="4.4" fill="#FFFFFF" stroke="#8A8A8A" stroke-width="0.45" rx="0" />
<path d="M410.98 50.14L413.23 50.14L412.1 51.43Z" fill="#606060"  />
<rect x="425.2" y="28.6" width="10.6" height="10.4" fill="#FFFFFF" stroke="#B5B5B5" stroke-width="0.5" rx="2.2" />
<path d="M430.2 37.6L434.8 31.4L436 32.3L431.6 38.4Z" fill="#8A8A8A"  />
<path d="M429 39.2C429.4 37.8 430 37.4 430.8 37.8C431.6 38.4 431.2 39.2 429 39.2Z" fill="#3B78C4"  />
<path d="M435.68 50.64L437.93 50.64L436.8 51.93Z" fill="#606060"  />
<path d="M441.6 31.4L444 28.8L446.2 31.2L443.8 33.4Z" fill="none" stroke="#6A6A6A" stroke-width="0.5" />
<path d="M446.6 31.4C447.2 32.2 447.2 32.8 446.6 33C446 32.8 446 32.2 446.6 31.4Z" fill="#6A6A6A"  />
<rect x="440.8" y="33.6" width="6.2" height="1.5" fill="#ED7D31"  rx="0" />
<path d="M469.27 30.94L471.52 30.94L470.4 32.23Z" fill="#606060"  />
<rect x="441" y="37.6" width="4.6" height="4.2" fill="none" stroke="#6A6A6A" stroke-width="0.45" rx="0" />
<path d="M442.4 41L446.4 36.8L447.2 37.6L443.2 41.6Z" fill="#3B78C4"  />
<rect x="440.8" y="42.6" width="6.2" height="1.5" fill="#3B78C4"  rx="0" />
<path d="M479.07 40.04L481.32 40.04L480.2 41.33Z" fill="#606060"  />
<rect x="441.2" y="47.4" width="4.8" height="3.6" fill="#FFFFFF" stroke="#6A6A6A" stroke-width="0.5" rx="0.8" />
<path d="M442.4 52H447V48.8" fill="none" stroke="#A0A0A0" stroke-width="0.7" />
<path d="M478.07 49.34L480.32 49.34L479.2 50.63Z" fill="#606060"  />
<circle cx="490.6" cy="30.2" r="1.6" fill="none" stroke="#3B78C4" stroke-width="0.55" />
<line x1="489.5" y1="31.5" x2="487.8" y2="33.4" stroke="#3B78C4" stroke-width="0.65" />
<path d="M487.6 41.4C488 42.8 489.4 43 490 42.4" fill="none" stroke="#6A6A6A" stroke-width="0.4" />
<path d="M515.08 40.04L517.33 40.04L516.2 41.33Z" fill="#606060"  />
<path d="M488.4 47L488.4 51.4L489.6 50.4L490.4 52.2L491 51.9L490.2 50.2L491.6 50.2Z" fill="#FFFFFF" stroke="#6A6A6A" stroke-width="0.4" />
<path d="M508.48 49.34L510.73 49.34L509.6 50.63Z" fill="#606060"  />
<rect x="529.6" y="28.4" width="3.0" height="6.2" fill="#3E7FCC"  rx="1.5" />
<path d="M528.4 32.4C528.4 36.6 533.8 36.6 533.8 32.4" fill="none" stroke="#8A8A8A" stroke-width="0.5" />
<line x1="531.1" y1="35.6" x2="531.1" y2="37.6" stroke="#8A8A8A" stroke-width="0.5" />
<line x1="529.4" y1="37.8" x2="532.8" y2="37.8" stroke="#8A8A8A" stroke-width="0.5" />
<path d="M529.88 50.14L532.12 50.14L531 51.43Z" fill="#606060"  />
<rect x="27.2" y="66.8" width="13.8" height="5.4" fill="none" stroke="#C2C2C2" stroke-width="0.5" rx="2.7" />
<circle cx="30.2" cy="69.5" r="0.9" fill="#C6C6C6"  />
<rect x="48.6" y="66.6" width="5.4" height="5.8" fill="#9B59B6"  rx="0.5" />
<rect x="49.8" y="66.6" width="3.0" height="2.0" fill="#E9DDF0"  rx="0" />
<rect x="49.6" y="70" width="3.4" height="2.4" fill="#F4EEF8"  rx="0" />
<rect x="59.6" y="66.6" width="5.2" height="5.0" fill="#F8F8F8" stroke="#6A6A6A" stroke-width="0.5" rx="0" />
<path d="M60.8 69.6L62 68L63.4 69.6" fill="none" stroke="#3B78C4" stroke-width="0.5" />
<rect x="71.4" y="67.4" width="6.4" height="4.6" fill="#FFFFFF" stroke="#6A6A6A" stroke-width="0.55" rx="0" />
<ellipse cx="85.7" cy="69.7" rx="3.0" ry="2.3" fill="#FFFFFF" stroke="#6A6A6A" stroke-width="0.55"/>
<line x1="95.2" y1="66.8" x2="100.6" y2="72.4" stroke="#6A6A6A" stroke-width="0.5" />
<path d="M106.2 67.4H109V72H112" fill="none" stroke="#6A6A6A" stroke-width="0.55" />
<path d="M119 69.2L121.4 66.6L123.6 69L121.2 71.2Z" fill="#FFFFFF" stroke="#6A6A6A" stroke-width="0.5" />
<path d="M124 69.4C124.6 70.2 124.6 70.8 124 71C123.4 70.8 123.4 70.2 124 69.4Z" fill="#6A6A6A"  />
<rect x="118" y="71.6" width="6.4" height="1.6" fill="#ED7D31"  rx="0" />
<path d="M126.20 69.30L128.20 69.30L127.2 70.45Z" fill="#606060"  />
<rect x="132.2" y="66.6" width="5.0" height="4.4" fill="#FFFFFF" stroke="#6A6A6A" stroke-width="0.45" rx="0" />
<path d="M134 70L137.6 66.2L138.4 67L134.8 70.8Z" fill="#3B78C4"  />
<rect x="132" y="71.6" width="6.4" height="1.6" fill="#4472C4"  rx="0" />
<path d="M140.20 69.30L142.20 69.30L141.2 70.45Z" fill="#606060"  />
<rect x="145.8" y="71.6" width="6.4" height="1.6" fill="#E81123"  rx="0" />
<path d="M154.20 69.30L156.20 69.30L155.2 70.45Z" fill="#606060"  />
<line x1="183.2" y1="67.60000000000001" x2="189.2" y2="67.60000000000001" stroke="#6A6A6A" stroke-width="0.45" />
<line x1="183.2" y1="69.00000000000001" x2="187.2" y2="69.00000000000001" stroke="#6A6A6A" stroke-width="0.45" />
<line x1="183.2" y1="70.4" x2="189.2" y2="70.4" stroke="#6A6A6A" stroke-width="0.45" />
<line x1="183.2" y1="71.80000000000001" x2="187.2" y2="71.80000000000001" stroke="#6A6A6A" stroke-width="0.45" />
<line x1="194.6" y1="67.60000000000001" x2="200.6" y2="67.60000000000001" stroke="#6A6A6A" stroke-width="0.45" />
<line x1="195.6" y1="69.00000000000001" x2="199.6" y2="69.00000000000001" stroke="#6A6A6A" stroke-width="0.45" />
<line x1="194.6" y1="70.4" x2="200.6" y2="70.4" stroke="#6A6A6A" stroke-width="0.45" />
<line x1="195.6" y1="71.80000000000001" x2="199.6" y2="71.80000000000001" stroke="#6A6A6A" stroke-width="0.45" />
<line x1="206.2" y1="67.60000000000001" x2="212.2" y2="67.60000000000001" stroke="#6A6A6A" stroke-width="0.45" />
<line x1="208.2" y1="69.00000000000001" x2="212.2" y2="69.00000000000001" stroke="#6A6A6A" stroke-width="0.45" />
<line x1="206.2" y1="70.4" x2="212.2" y2="70.4" stroke="#6A6A6A" stroke-width="0.45" />
<line x1="208.2" y1="71.80000000000001" x2="212.2" y2="71.80000000000001" stroke="#6A6A6A" stroke-width="0.45" />
<path d="M217.2 67V72.6M217.2 67H218M217.2 72.6H218M221.4 67V72.6M221.4 67H220.6M221.4 72.6H220.6" fill="none" stroke="#6A6A6A" stroke-width="0.5" />
<path d="M219.3 67.2V69M218.6 67.9L219.3 67.2L220 67.9M219.3 72.4V70.6M218.6 71.7L219.3 72.4L220 71.7" fill="none" stroke="#3B78C4" stroke-width="0.5" />
<path d="M224.40 69.30L226.40 69.30L225.4 70.45Z" fill="#606060"  />
<rect x="230.8" y="66.7" width="2.6" height="2.4" fill="#FFFFFF" stroke="#8A8A8A" stroke-width="0.4" rx="0" />
<rect x="234.8" y="70.1" width="2.6" height="2.4" fill="#FFFFFF" stroke="#8A8A8A" stroke-width="0.4" rx="0" />
<rect x="232.2" y="67.9" width="3.8" height="3.6" fill="#F0C36E"  rx="0" />
<rect x="243.6" y="67.9" width="3.8" height="3.6" fill="#F0C36E"  rx="0" />
<rect x="242.20000000000002" y="66.7" width="2.8" height="2.6" fill="#FFFFFF" stroke="#8A8A8A" stroke-width="0.4" rx="0" />
<rect x="246.0" y="69.9" width="2.8" height="2.6" fill="#FFFFFF" stroke="#8A8A8A" stroke-width="0.4" rx="0" />
<rect x="257.2" y="69.3" width="3.0" height="3.0" fill="#FFFFFF" stroke="#8A8A8A" stroke-width="0.4" rx="0" />
<rect x="254" y="66.7" width="4.6" height="4.4" fill="#F0C36E"  rx="0" />
<rect x="265.6" y="66.7" width="4.6" height="4.4" fill="#F0C36E"  rx="0" />
<rect x="268.40000000000003" y="68.9" width="3.4" height="3.4" fill="#FFFFFF" stroke="#8A8A8A" stroke-width="0.4" rx="0" />
<rect x="278" y="66.7" width="3.6" height="4.6" fill="#F4F4F4" stroke="#7A7A7A" stroke-width="0.45" rx="0" />
<line x1="278.8" y1="67.9" x2="280.8" y2="67.9" stroke="#7A7A7A" stroke-width="0.35" />
<line x1="278.8" y1="69.1" x2="280.8" y2="69.1" stroke="#7A7A7A" stroke-width="0.35" />
<path d="M278.6 72.1H282M281.2 71.3L282 72.1L281.2 72.9" fill="none" stroke="#3B78C4" stroke-width="0.5" />
<rect x="290.2" y="69.1" width="4.4" height="3.0" fill="#F4F4F4" stroke="#7A7A7A" stroke-width="0.45" rx="0.6" />
<path d="M291.2 69.1V68.1A1.2 1.2 0 0 1 293.59999999999997 68.1V69.1" fill="none" stroke="#7A7A7A" stroke-width="0.45" />
<rect x="302.20000000000005" y="66.7" width="3.6" height="4.4" fill="#F4F4F4" stroke="#7A7A7A" stroke-width="0.45" rx="0" />
<line x1="303.0" y1="67.9" x2="305.0" y2="67.9" stroke="#7A7A7A" stroke-width="0.35" />
<line x1="303.0" y1="69.1" x2="305.0" y2="69.1" stroke="#7A7A7A" stroke-width="0.35" />
<path d="M305.0 72.1H301.40000000000003M302.20000000000005 71.3L301.40000000000003 72.1L302.20000000000005 72.9" fill="none" stroke="#3B78C4" stroke-width="0.5" />
<path d="M312.59999999999997 67.3H315.8L315.4 69.9H313.0Z" fill="#F4F4F4" stroke="#7A7A7A" stroke-width="0.45" />
<path d="M317.0 70.9V67.3M316.2 68.1L317.0 67.3L317.8 68.1" fill="none" stroke="#3B78C4" stroke-width="0.5" />
<line x1="313.59999999999997" y1="70.7" x2="313.59999999999997" y2="72.1" stroke="#7A7A7A" stroke-width="0.4" />
<line x1="314.8" y1="70.7" x2="314.8" y2="71.7" stroke="#7A7A7A" stroke-width="0.4" />
<rect x="326.2" y="67.7" width="3.4" height="3.6" fill="#F4F4F4" stroke="#7A7A7A" stroke-width="0.45" rx="0.8" />
<line x1="324" y1="69.5" x2="326.2" y2="69.5" stroke="#7A7A7A" stroke-width="0.45" />
<path d="M324.8 68.7L324 69.5L324.8 70.3" fill="none" stroke="#7A7A7A" stroke-width="0.4" />
<rect x="336.20000000000005" y="68.7" width="4.8" height="3.2" fill="#F4F4F4" stroke="#7A7A7A" stroke-width="0.45" rx="0.5" />
<path d="M337.40000000000003 68.7V67.5H339.0" fill="none" stroke="#7A7A7A" stroke-width="0.45" />
<path d="M339.8 71.3V68.5M339.0 69.3L339.8 68.5L340.6 69.3" fill="none" stroke="#3B78C4" stroke-width="0.5" />
<rect x="347.4" y="68.1" width="3.4" height="3.2" fill="#F4F4F4" stroke="#7A7A7A" stroke-width="0.45" rx="0.5" />
<path d="M351.0 68.1L353.0 69.7L351.0 71.3Z" fill="#F4F4F4" stroke="#7A7A7A" stroke-width="0.45" />
<rect x="359.6" y="68.9" width="4" height="3.4" fill="#FFFFFF" stroke="#7A7A7A" stroke-width="0.45" rx="0.4" />
<rect x="360.40000000000003" y="66.7" width="2.4" height="2.2" fill="#F4F4F4" stroke="#7A7A7A" stroke-width="0.45" rx="0.4" />
<line x1="360.40000000000003" y1="70.5" x2="362.8" y2="70.5" stroke="#7A7A7A" stroke-width="0.4" />
<rect x="370.79999999999995" y="66.9" width="5.2" height="5.2" fill="none" stroke="#C0C0C0" stroke-width="0.45" rx="0" stroke-dasharray="0.9 0.6"/>
<rect x="371.59999999999997" y="67.7" width="2.2" height="2.2" fill="#EDEDED" stroke="#C0C0C0" stroke-width="0.4" rx="0" />
<rect x="373.2" y="69.3" width="2.2" height="2.2" fill="#EDEDED" stroke="#C0C0C0" stroke-width="0.4" rx="0" />
<rect x="382.4" y="66.9" width="5.2" height="5.2" fill="none" stroke="#8A8A8A" stroke-width="0.45" rx="0" stroke-dasharray="0.9 0.6"/>
<rect x="383.2" y="67.7" width="2.2" height="2.2" fill="#EDEDED" stroke="#8A8A8A" stroke-width="0.4" rx="0" />
<rect x="384.8" y="69.3" width="2.2" height="2.2" fill="#EDEDED" stroke="#8A8A8A" stroke-width="0.4" rx="0" />
<rect x="393.79999999999995" y="66.9" width="5.2" height="5.2" fill="none" stroke="#BDBDBD" stroke-width="0.45" rx="0" stroke-dasharray="0.9 0.6"/>
<rect x="394.59999999999997" y="67.7" width="2.2" height="2.2" fill="#EDEDED" stroke="#BDBDBD" stroke-width="0.4" rx="0" />
<rect x="396.2" y="69.3" width="2.2" height="2.2" fill="#EDEDED" stroke="#BDBDBD" stroke-width="0.4" rx="0" />
<path d="M462.6 71.9L466.40000000000003 67.1L467.20000000000005 67.7L463.40000000000003 72.3Z" fill="#B0B0B0"  />
<path d="M462.0 66.9L462.8 67.7M461.8 68.7H462.8" fill="none" stroke="#B0B0B0" stroke-width="0.4" />
<path d="M473.8 71.9L477.6 67.1L478.40000000000003 67.7L474.6 72.3Z" fill="#6A6A6A"  />
<path d="M473.2 66.9L474.0 67.7M473.0 68.7H474.0" fill="none" stroke="#3B78C4" stroke-width="0.4" />
<path d="M486.2 67L487 72.2M486.2 67H489.6M488 69.4H491.8L490.2 67.6M491.8 69.4L490.2 71.2" fill="none" stroke="#3B78C4" stroke-width="0.6" />
<rect x="490.4" y="70.2" width="2.4" height="2.4" fill="#6A6A6A"  rx="0" />
<polygon points="500.20,66.50 500.94,68.48 503.05,68.57 501.40,69.89 501.96,71.93 500.20,70.76 498.44,71.93 499.00,69.89 497.35,68.57 499.46,68.48" fill="#BDBDBD" />
<polygon points="510.60,66.50 511.34,68.48 513.45,68.57 511.80,69.89 512.36,71.93 510.60,70.76 508.84,71.93 509.40,69.89 507.75,68.57 509.86,68.48" fill="#2E75C8" />
<path d="M516.40 69.30L518.40 69.30L517.4 70.45Z" fill="#606060"  />
<polygon points="524.60,66.50 525.34,68.48 527.45,68.57 525.80,69.89 526.36,71.93 524.60,70.76 522.84,71.93 523.40,69.89 521.75,68.57 523.86,68.48" fill="#ADADAD" />
<path d="M530.20 69.30L532.20 69.30L531.2 70.45Z" fill="#BBB"  />
<polygon points="540.20,66.50 540.94,68.48 543.05,68.57 541.40,69.89 541.96,71.93 540.20,70.76 538.44,71.93 539.00,69.89 537.35,68.57 539.46,68.48" fill="#3FA37C" />
<polygon points="551.80,66.50 552.54,68.48 554.65,68.57 553.00,69.89 553.56,71.93 551.80,70.76 550.04,71.93 550.60,69.89 548.95,68.57 551.06,68.48" fill="#3FA37C" />
<polygon points="563.40,66.50 564.14,68.48 566.25,68.57 564.60,69.89 565.16,71.93 563.40,70.76 561.64,71.93 562.20,69.89 560.55,68.57 562.66,68.48" fill="#E2502A" />
<polygon points="575.00,66.50 575.74,68.48 577.85,68.57 576.20,69.89 576.76,71.93 575.00,70.76 573.24,71.93 573.80,69.89 572.15,68.57 574.26,68.48" fill="#E2502A" />
<polygon points="586.60,66.50 587.34,68.48 589.45,68.57 587.80,69.89 588.36,71.93 586.60,70.76 584.84,71.93 585.40,69.89 583.75,68.57 585.86,68.48" fill="#F2B544" />
<polygon points="598.20,66.50 598.94,68.48 601.05,68.57 599.40,69.89 599.96,71.93 598.20,70.76 596.44,71.93 597.00,69.89 595.35,68.57 597.46,68.48" fill="#F2B544" />
<polygon points="609.60,67.00 610.27,68.78 612.17,68.87 610.68,70.05 611.19,71.88 609.60,70.83 608.01,71.88 608.52,70.05 607.03,68.87 608.93,68.78" fill="#F4F4F4" stroke="#6A6A6A" stroke-width="0.55"/>
<path d="M608.4 66.6L609.6 65.8L610.8 66.6" fill="none" stroke="#3FA37C" stroke-width="0.5" />
<polygon points="621.20,67.00 621.87,68.78 623.77,68.87 622.28,70.05 622.79,71.88 621.20,70.83 619.61,71.88 620.12,70.05 618.63,68.87 620.53,68.78" fill="#F4F4F4" stroke="#6A6A6A" stroke-width="0.55"/>
<path d="M620 66.6L621.2 65.8L622.4 66.6" fill="none" stroke="#E2502A" stroke-width="0.5" />
<rect x="630.2" y="65.2" width="24.4" height="8.8" fill="#FFFFFF" stroke="#CDCDCD" stroke-width="0.5" rx="0" />
<path d="M651.4 68.4L652.2 67.6L653 68.4M651.4 70.8L652.2 71.6L653 70.8" fill="none" stroke="#8A8A8A" stroke-width="0.4" />
<rect x="659.8" y="67.2" width="5.2" height="4.8" fill="none" stroke="#ABABAB" stroke-width="0.45" rx="0" stroke-dasharray="0.9 0.7"/>
<path d="M661 70.8L664 68" fill="none" stroke="#ABABAB" stroke-width="0.4" />
<path d="M669.4 67.6H674.2V71H672L670.8 72.2V71H669.4Z" fill="#F4F8FD" stroke="#4A82C8" stroke-width="0.55" />
<circle cx="674.2" cy="68.8" r="1.5" fill="#F4F8FD" stroke="#4A82C8" stroke-width="0.5" />
<path d="M678.40 69.30L680.40 69.30L679.4 70.45Z" fill="#606060"  />
<line x1="686.2" y1="68.8" x2="688.2" y2="68.8" stroke="#666" stroke-width="0.4" />
<path d="M686.33 70.16L688.08 70.16L687.2 71.17Z" fill="#666"  />
<rect x="33.6" y="409.2" width="4.2" height="4.0" fill="none" stroke="#7A7A7A" stroke-width="0.45" rx="0" />
<path d="M35 410.4H36.6M35 411.6H36.6M36.6 412.4L38.4 413.6" fill="none" stroke="#7A7A7A" stroke-width="0.4" />
<path d="M602 413.2H606.6M602.8 412L604.3 409.2L605.8 412Z" fill="none" stroke="#5A5A5A" stroke-width="0.55" />
<rect x="633.4" y="409.2" width="5.8" height="4.4" fill="none" stroke="#6A6A6A" stroke-width="0.5" rx="0" />
<line x1="635.2" y1="409.2" x2="635.2" y2="413.6" stroke="#6A6A6A" stroke-width="0.4" />
<line x1="633.4" y1="410.6" x2="635.2" y2="410.6" stroke="#6A6A6A" stroke-width="0.4" />
<line x1="633.4" y1="412.1" x2="635.2" y2="412.1" stroke="#6A6A6A" stroke-width="0.4" />
<rect x="648.6" y="409.3" width="1.4" height="1.4" fill="none" stroke="#7A7A7A" stroke-width="0.4" rx="0" />
<rect x="648.6" y="411.9" width="1.4" height="1.4" fill="none" stroke="#7A7A7A" stroke-width="0.4" rx="0" />
<rect x="650.7" y="409.3" width="1.4" height="1.4" fill="none" stroke="#7A7A7A" stroke-width="0.4" rx="0" />
<rect x="650.7" y="411.9" width="1.4" height="1.4" fill="none" stroke="#7A7A7A" stroke-width="0.4" rx="0" />
<rect x="652.8000000000001" y="409.3" width="1.4" height="1.4" fill="none" stroke="#7A7A7A" stroke-width="0.4" rx="0" />
<rect x="652.8000000000001" y="411.9" width="1.4" height="1.4" fill="none" stroke="#7A7A7A" stroke-width="0.4" rx="0" />
<path d="M663.4 409.4H666V413.4H663.4ZM666 409.4H668.6V413.4H666" fill="none" stroke="#7A7A7A" stroke-width="0.45" />
<path d="M678.4 409.2H684V412.2H678.4ZM681.2 412.2V413.2M680 413.8H682.4" fill="none" stroke="#7A7A7A" stroke-width="0.45" />
<line x1="691.8" y1="411.4" x2="694.2" y2="411.4" stroke="#555" stroke-width="0.5" />
<line x1="696.4" y1="411.4" x2="734.6" y2="411.4" stroke="#A8A8A8" stroke-width="0.5" />
<rect x="714.4" y="409" width="1.5" height="4.8" fill="#666"  rx="0" />
<line x1="736.6" y1="411.4" x2="739.4" y2="411.4" stroke="#555" stroke-width="0.5" />
<line x1="738" y1="410" x2="738" y2="412.8" stroke="#555" stroke-width="0.5" />
<rect x="760.4" y="409.2" width="5" height="4.4" fill="none" stroke="#7A7A7A" stroke-width="0.45" rx="0" />
<path d="M761.6 410.4L764.2 412.4M764.2 410.4L761.6 412.4" fill="none" stroke="#7A7A7A" stroke-width="0.35" />
<rect x="3.4" y="420.4" width="3.4" height="3.3" fill="#FFFFFF"  rx="0" />
<rect x="7.3" y="420.4" width="3.4" height="3.3" fill="#FFFFFF"  rx="0" />
<rect x="3.4" y="424.2" width="3.4" height="3.3" fill="#FFFFFF"  rx="0" />
<rect x="7.3" y="424.2" width="3.4" height="3.3" fill="#FFFFFF"  rx="0" />
<circle cx="27" cy="423.8" r="3.0" fill="none" stroke="#1A1A1A" stroke-width="0.9" />
<rect x="147.3" y="420" width="2.0" height="4.4" fill="#F2F2F2" stroke="#2A2A2A" stroke-width="0.6" rx="1.0" />
<path d="M146 423.2C146 426.2 150.6 426.2 150.6 423.2M148.3 425.6V427.2" fill="none" stroke="#2A2A2A" stroke-width="0.6" />
<rect x="162.8" y="421.2" width="5.4" height="5.4" fill="none" stroke="#E8E8E8" stroke-width="0.7" rx="0" />
<path d="M169.8 420.8V427M168.2 422.6H170.6M168.2 425.2H170.6" fill="none" stroke="#E8E8E8" stroke-width="0.55" />
<path d="M182 420.4H185.6L186.6 421.6H190.8V427.4H182Z" fill="#F3C24A"  />
<rect x="182.6" y="422.8" width="8.2" height="4.6" fill="#FBE29A"  rx="0" />
<rect x="184.4" y="424.8" width="4.6" height="2.6" fill="#4FA6E8"  rx="0" />
<path d="M201.8 422H210.8V428H201.8Z" fill="#F4F4F4"  />
<path d="M204.2 422V420.8C204.2 419.2 208.4 419.2 208.4 420.8V422" fill="none" stroke="#F4F4F4" stroke-width="0.7" />
<rect x="204.1" y="423.2" width="2.0" height="1.9" fill="#F25022"  rx="0" />
<rect x="206.5" y="423.2" width="2.0" height="1.9" fill="#7FBA00"  rx="0" />
<rect x="204.1" y="425.4" width="2.0" height="1.9" fill="#00A4EF"  rx="0" />
<rect x="206.5" y="425.4" width="2.0" height="1.9" fill="#FFB900"  rx="0" />
<rect x="241.2" y="419.7" width="8.4" height="8.2" fill="none" stroke="#F4F4F4" stroke-width="0.8" rx="0" />
<path d="M241.4 427.6L244 423.6L245.6 425.4L247.2 422.6L249.4 427.6Z" fill="#F4F4F4"  />
<circle cx="265.2" cy="423.5" r="4.3" fill="#F1F1F1"  />
<path d="M261.47999999999996 421.35A4.3 4.3 0 0 1 268.92 421.35L265.2 423.5Z" fill="#DB4437"  />
<path d="M261.47999999999996 421.35L265.2 423.5L265.2 427.8A4.3 4.3 0 0 1 261.47999999999996 421.35Z" fill="#0F9D58"  />
<path d="M268.92 421.35L265.2 423.5L265.2 427.8A4.3 4.3 0 0 0 268.92 421.35Z" fill="#FFCD40"  />
<circle cx="265.2" cy="423.5" r="1.9" fill="#4285F4" stroke="#F1F1F1" stroke-width="0.7" />
<rect x="280.8" y="419.4" width="8.2" height="8.2" fill="#49021F" stroke="#E8378A" stroke-width="0.7" rx="0" />
<rect x="302.6" y="420.6" width="6.6" height="6.0" fill="#F4F4F4"  rx="0" />
<rect x="299.6" y="419.6" width="6.0" height="7.8" fill="#0F64B4"  rx="0" />
<path d="M306 421.8L307.5 423L309 421.8" fill="none" stroke="#0F64B4" stroke-width="0.5" />
<rect x="322" y="420.4" width="6.6" height="6.4" fill="#2E8B57" stroke="#1E7145" stroke-width="0.5" rx="0" />
<rect x="319.4" y="419.6" width="5.8" height="7.8" fill="#1E7145"  rx="0" />
<line x1="325.4" y1="422.4" x2="328.4" y2="422.4" stroke="#CFE8D8" stroke-width="0.45" />
<line x1="325.4" y1="424.4" x2="328.4" y2="424.4" stroke="#CFE8D8" stroke-width="0.45" />
<line x1="327" y1="420.6" x2="327" y2="426.6" stroke="#CFE8D8" stroke-width="0.4" />
<circle cx="343.4" cy="423.5" r="4.5" fill="#1ED760"  />
<path d="M340.6 422C342.8 421.4 344.8 421.6 346.4 422.5M341 423.8C342.8 423.3 344.4 423.5 345.8 424.3M341.4 425.5C342.7 425.1 343.9 425.3 345 425.9" fill="none" stroke="#111" stroke-width="0.65" />
<circle cx="363" cy="423.5" r="4.4" fill="#C45BB0"  />
<rect x="378.4" y="419.4" width="8.4" height="8.2" fill="#2B1300" stroke="#E8740C" stroke-width="0.7" rx="0" />
<rect x="398.2" y="419.4" width="8.4" height="8.2" fill="#3A0A08" stroke="#C8251D" stroke-width="0.7" rx="0" />
<path d="M400 426.2C402.2 424.6 403 422 402.4 421C401.8 422.2 403.4 424.8 405.4 425C403.6 424.6 401.4 425.2 400 426.2Z" fill="none" stroke="#F4F4F4" stroke-width="0.55" />
<rect x="417.8" y="420.4" width="6.2" height="6.6" fill="#5059C9"  rx="0" />
<circle cx="425.4" cy="421.6" r="1.4" fill="#A4A9F0"  />
<rect x="423.6" y="423.2" width="3.8" height="3.4" fill="#7B83EB"  rx="0.8" />
<circle cx="425.8" cy="426.6" r="1.9" fill="#E81123"  />
<rect x="440.6" y="420.4" width="6.4" height="6.4" fill="#F4F4F4" stroke="#D24726" stroke-width="0.5" rx="0" />
<rect x="437" y="419.6" width="6.0" height="7.8" fill="#D24726"  rx="0" />
<line x1="444" y1="422.4" x2="446.2" y2="422.4" stroke="#D24726" stroke-width="0.45" />
<line x1="444" y1="424.4" x2="446.2" y2="424.4" stroke="#D24726" stroke-width="0.45" />
<rect x="459.6" y="420.4" width="6.2" height="6.4" fill="#F4F4F4" stroke="#2B579A" stroke-width="0.5" rx="0" />
<rect x="456.8" y="419.6" width="6.0" height="7.8" fill="#2B579A"  rx="0" />
<line x1="463.4" y1="422.4" x2="465.2" y2="422.4" stroke="#2B579A" stroke-width="0.45" />
<line x1="463.4" y1="424.4" x2="465.2" y2="424.4" stroke="#2B579A" stroke-width="0.45" />
<ellipse cx="481" cy="422.2" rx="4.2" ry="2.8" fill="#E9E9E9"/>
<path d="M478.4 426.4L483.6 421.6" fill="none" stroke="#D04A3A" stroke-width="0.9" />
<path d="M481.6 426.8L485.6 422.8" fill="none" stroke="#3B8CD8" stroke-width="0.9" />
<circle cx="478.2" cy="426.6" r="0.9" fill="none" stroke="#D04A3A" stroke-width="0.55" />
<circle cx="483.8" cy="427" r="0.9" fill="none" stroke="#3B8CD8" stroke-width="0.55" />
<rect x="179" y="431.1" width="16" height="0.9" fill="#E4DCBC"  rx="0" />
<rect x="237.4" y="431.1" width="16" height="0.9" fill="#E4DCBC"  rx="0" />
<rect x="257.2" y="431.1" width="16" height="0.9" fill="#E4DCBC"  rx="0" />
<rect x="277" y="431.1" width="16" height="0.9" fill="#E4DCBC"  rx="0" />
<rect x="296.4" y="431.1" width="16" height="0.9" fill="#E4DCBC"  rx="0" />
<rect x="316" y="431.1" width="16" height="0.9" fill="#E4DCBC"  rx="0" />
<rect x="335.4" y="431.1" width="16" height="0.9" fill="#E4DCBC"  rx="0" />
<rect x="355" y="431.1" width="16" height="0.9" fill="#E4DCBC"  rx="0" />
<rect x="374.6" y="431.1" width="16" height="0.9" fill="#E4DCBC"  rx="0" />
<rect x="394.2" y="431.1" width="16" height="0.9" fill="#E4DCBC"  rx="0" />
<rect x="414" y="431.1" width="16" height="0.9" fill="#E4DCBC"  rx="0" />
<rect x="453.4" y="431.1" width="16" height="0.9" fill="#E4DCBC"  rx="0" />
<rect x="473" y="431.1" width="16" height="0.9" fill="#E4DCBC"  rx="0" />
<rect x="432" y="431.0" width="19.5" height="1.0" fill="#EFE7C8"  rx="0" />
<path d="M645.2 427.2C645.2 424.4 648.8 424.4 648.8 427.2" fill="none" stroke="#E8E8E8" stroke-width="0.55" />
<circle cx="647" cy="422.8" r="1.1" fill="none" stroke="#E8E8E8" stroke-width="0.55" />
<circle cx="649.8" cy="421" r="0.9" fill="none" stroke="#E8E8E8" stroke-width="0.45" />
<path d="M658.6 424.8L661 422.4L663.4 424.8" fill="none" stroke="#F0F0F0" stroke-width="0.65" />
<rect x="667.6" y="421.8" width="7" height="4.0" fill="#EDEDED"  rx="0" />
<path d="M677 425.2C675.4 425.2 675.2 423 677 422.8C677.4 420.8 680.4 420.8 681 422.4C683.2 422 683.6 425.2 681.8 425.2Z" fill="#2B88D8"  />
<path d="M679.8 426.6C678.6 426.6 678.4 425 679.8 424.8C680.2 423.4 682.2 423.4 682.6 424.6C684.2 424.4 684.4 426.6 683.2 426.6Z" fill="#6AB4F0"  />
<path d="M687.2 422.8H688.6L690.4 421.2V426.4L688.6 424.8H687.2Z" fill="none" stroke="#E0E0E0" stroke-width="0.5" />
<path d="M691.4 422.4C692.2 423.2 692.2 424.4 691.4 425.2M692.6 421.4C694 422.8 694 424.8 692.6 426.2" fill="none" stroke="#8A8A8A" stroke-width="0.4" />
<path d="M697.2 426.2L702.8 421.2V426.2Z" fill="none" stroke="#E0E0E0" stroke-width="0.5" />
<path d="M697.2 426.2C698 424.6 699.6 423.6 701.2 423.6" fill="none" stroke="#E0E0E0" stroke-width="0.4" />
<path d="M751.2 420.4H758V425.4H755L753.4 427V425.4H751.2Z" fill="#F4F4F4"  />
<circle cx="757.4" cy="426.6" r="2.5" fill="#2A2A2A" stroke="#CFCFCF" stroke-width="0.45" />
<line x1="765.6" y1="416" x2="765.6" y2="432" stroke="#4A4A4A" stroke-width="0.4" />
</svg>
<span style="left:5.00px;top:82px;font-size:5.20px;line-height:8px;color:#D0532F;">1</span>
<span style="left:187.53px;top:78px;font-size:4.80px;line-height:7px;color:#4A4A4A;">16</span>
<span style="left:203.43px;top:78px;font-size:4.80px;line-height:7px;color:#4A4A4A;">15</span>
<span style="left:219.33px;top:78px;font-size:4.80px;line-height:7px;color:#4A4A4A;">14</span>
<span style="left:235.23px;top:78px;font-size:4.80px;line-height:7px;color:#4A4A4A;">13</span>
<span style="left:251.13px;top:78px;font-size:4.80px;line-height:7px;color:#4A4A4A;">12</span>
<span style="left:267.21px;top:78px;font-size:4.80px;line-height:7px;color:#4A4A4A;">11</span>
<span style="left:282.93px;top:78px;font-size:4.80px;line-height:7px;color:#4A4A4A;">10</span>
<span style="left:300.17px;top:78px;font-size:4.80px;line-height:7px;color:#4A4A4A;">9</span>
<span style="left:316.07px;top:78px;font-size:4.80px;line-height:7px;color:#4A4A4A;">8</span>
<span style="left:331.97px;top:78px;font-size:4.80px;line-height:7px;color:#4A4A4A;">7</span>
<span style="left:347.87px;top:78px;font-size:4.80px;line-height:7px;color:#4A4A4A;">6</span>
<span style="left:363.77px;top:78px;font-size:4.80px;line-height:7px;color:#4A4A4A;">5</span>
<span style="left:379.67px;top:78px;font-size:4.80px;line-height:7px;color:#4A4A4A;">4</span>
<span style="left:395.57px;top:78px;font-size:4.80px;line-height:7px;color:#4A4A4A;">3</span>
<span style="left:411.47px;top:78px;font-size:4.80px;line-height:7px;color:#4A4A4A;">2</span>
<span style="left:427.37px;top:78px;font-size:4.80px;line-height:7px;color:#4A4A4A;">1</span>
<span style="left:443.27px;top:78px;font-size:4.80px;line-height:7px;color:#4A4A4A;">0</span>
<span style="left:459.17px;top:78px;font-size:4.80px;line-height:7px;color:#4A4A4A;">1</span>
<span style="left:475.07px;top:78px;font-size:4.80px;line-height:7px;color:#4A4A4A;">2</span>
<span style="left:490.97px;top:78px;font-size:4.80px;line-height:7px;color:#4A4A4A;">3</span>
<span style="left:506.87px;top:78px;font-size:4.80px;line-height:7px;color:#4A4A4A;">4</span>
<span style="left:522.77px;top:78px;font-size:4.80px;line-height:7px;color:#4A4A4A;">5</span>
<span style="left:538.67px;top:78px;font-size:4.80px;line-height:7px;color:#4A4A4A;">6</span>
<span style="left:554.57px;top:78px;font-size:4.80px;line-height:7px;color:#4A4A4A;">7</span>
<span style="left:570.47px;top:78px;font-size:4.80px;line-height:7px;color:#4A4A4A;">8</span>
<span style="left:586.37px;top:78px;font-size:4.80px;line-height:7px;color:#4A4A4A;">9</span>
<span style="left:600.93px;top:78px;font-size:4.80px;line-height:7px;color:#4A4A4A;">10</span>
<span style="left:617.01px;top:78px;font-size:4.80px;line-height:7px;color:#4A4A4A;">11</span>
<span style="left:632.73px;top:78px;font-size:4.80px;line-height:7px;color:#4A4A4A;">12</span>
<span style="left:648.63px;top:78px;font-size:4.80px;line-height:7px;color:#4A4A4A;">13</span>
<span style="left:664.53px;top:78px;font-size:4.80px;line-height:7px;color:#4A4A4A;">14</span>
<span style="left:680.43px;top:78px;font-size:4.80px;line-height:7px;color:#4A4A4A;">15</span>
<span style="left:696.33px;top:78px;font-size:4.80px;line-height:7px;color:#4A4A4A;">16</span>
<span style="left:120.37px;top:100px;font-size:4.80px;line-height:7px;color:#4A4A4A;transform:rotate(-90deg);transform-origin:50% 50%;">9</span>
<span style="left:120.37px;top:116px;font-size:4.80px;line-height:7px;color:#4A4A4A;transform:rotate(-90deg);transform-origin:50% 50%;">8</span>
<span style="left:120.37px;top:132px;font-size:4.80px;line-height:7px;color:#4A4A4A;transform:rotate(-90deg);transform-origin:50% 50%;">7</span>
<span style="left:120.37px;top:148px;font-size:4.80px;line-height:7px;color:#4A4A4A;transform:rotate(-90deg);transform-origin:50% 50%;">6</span>
<span style="left:120.37px;top:164px;font-size:4.80px;line-height:7px;color:#4A4A4A;transform:rotate(-90deg);transform-origin:50% 50%;">5</span>
<span style="left:120.37px;top:180px;font-size:4.80px;line-height:7px;color:#4A4A4A;transform:rotate(-90deg);transform-origin:50% 50%;">4</span>
<span style="left:120.37px;top:195px;font-size:4.80px;line-height:7px;color:#4A4A4A;transform:rotate(-90deg);transform-origin:50% 50%;">3</span>
<span style="left:120.37px;top:211px;font-size:4.80px;line-height:7px;color:#4A4A4A;transform:rotate(-90deg);transform-origin:50% 50%;">2</span>
<span style="left:120.37px;top:227px;font-size:4.80px;line-height:7px;color:#4A4A4A;transform:rotate(-90deg);transform-origin:50% 50%;">1</span>
<span style="left:120.37px;top:243px;font-size:4.80px;line-height:7px;color:#4A4A4A;transform:rotate(-90deg);transform-origin:50% 50%;">0</span>
<span style="left:120.37px;top:259px;font-size:4.80px;line-height:7px;color:#4A4A4A;transform:rotate(-90deg);transform-origin:50% 50%;">1</span>
<span style="left:120.37px;top:275px;font-size:4.80px;line-height:7px;color:#4A4A4A;transform:rotate(-90deg);transform-origin:50% 50%;">2</span>
<span style="left:120.37px;top:291px;font-size:4.80px;line-height:7px;color:#4A4A4A;transform:rotate(-90deg);transform-origin:50% 50%;">3</span>
<span style="left:120.37px;top:307px;font-size:4.80px;line-height:7px;color:#4A4A4A;transform:rotate(-90deg);transform-origin:50% 50%;">4</span>
<span style="left:120.37px;top:323px;font-size:4.80px;line-height:7px;color:#4A4A4A;transform:rotate(-90deg);transform-origin:50% 50%;">5</span>
<span style="left:120.37px;top:339px;font-size:4.80px;line-height:7px;color:#4A4A4A;transform:rotate(-90deg);transform-origin:50% 50%;">6</span>
<span style="left:120.37px;top:355px;font-size:4.80px;line-height:7px;color:#4A4A4A;transform:rotate(-90deg);transform-origin:50% 50%;">7</span>
<span style="left:120.37px;top:370px;font-size:4.80px;line-height:7px;color:#4A4A4A;transform:rotate(-90deg);transform-origin:50% 50%;">8</span>
<span style="left:120.37px;top:386px;font-size:4.80px;line-height:7px;color:#4A4A4A;transform:rotate(-90deg);transform-origin:50% 50%;">9</span>
<span style="left:131.75px;top:3px;font-size:4.75px;line-height:7px;color:#FFFFFF;">Presentation1  -  PowerPoint</span>
<span style="left:321.05px;top:3px;font-size:4.87px;line-height:7px;color:#F0D6CE;">Drawing Tools</span>
<span style="left:8.00px;top:16px;font-size:4.72px;line-height:7px;color:#FFFFFF;">File</span>
<span style="left:28.80px;top:15px;font-size:5.10px;line-height:8px;color:#B7472A;">Home</span>
<span style="left:53.00px;top:16px;font-size:4.80px;line-height:7px;color:#FFFFFF;">Insert</span>
<span style="left:75.80px;top:16px;font-size:4.66px;line-height:7px;color:#FFFFFF;">Design</span>
<span style="left:101.00px;top:16px;font-size:4.74px;line-height:7px;color:#FFFFFF;">Transitions</span>
<span style="left:134.00px;top:15px;font-size:5.05px;line-height:8px;color:#FFFFFF;">Animations</span>
<span style="left:169.80px;top:16px;font-size:4.60px;line-height:7px;color:#FFFFFF;">Slide Show</span>
<span style="left:203.00px;top:16px;font-size:4.57px;line-height:7px;color:#FFFFFF;">Review</span>
<span style="left:228.80px;top:16px;font-size:4.65px;line-height:7px;color:#FFFFFF;">View</span>
<span style="left:249.00px;top:16px;font-size:4.86px;line-height:7px;color:#FFFFFF;">Help</span>
<span style="left:270.00px;top:16px;font-size:4.62px;line-height:7px;color:#FFFFFF;">ACROBAT</span>
<span style="left:302.00px;top:16px;font-size:4.61px;line-height:7px;color:#FFFFFF;">Pens</span>
<span style="left:328.50px;top:16px;font-size:4.89px;line-height:7px;color:#FFFFFF;">Format</span>
<span style="left:367.50px;top:16px;font-size:4.94px;line-height:7px;color:#F6E3DD;">Tell me what you want to do</span>
<span style="left:735.00px;top:16px;font-size:4.50px;line-height:7px;color:#FFFFFF;letter-spacing:-0.002px;">Share</span>
<span style="left:18.00px;top:56px;font-size:4.79px;line-height:7px;color:#555;">Clipboard</span>
<span style="left:82.30px;top:56px;font-size:4.50px;line-height:7px;color:#555;letter-spacing:-0.043px;">Slides</span>
<span style="left:158.00px;top:56px;font-size:4.60px;line-height:7px;color:#555;">Font</span>
<span style="left:268.00px;top:56px;font-size:4.60px;line-height:7px;color:#555;">Paragraph</span>
<span style="left:495.00px;top:56px;font-size:4.91px;line-height:7px;color:#555;">Editing</span>
<span style="left:525.00px;top:56px;font-size:4.91px;line-height:7px;color:#555;">Voice</span>
<span style="left:4.30px;top:42px;font-size:4.69px;line-height:7px;color:#484848;">Paste</span>
<span style="left:27.30px;top:28px;font-size:4.76px;line-height:7px;color:#484848;">Cut</span>
<span style="left:27.30px;top:37px;font-size:4.54px;line-height:7px;color:#484848;">Copy</span>
<span style="left:27.30px;top:47px;font-size:4.72px;line-height:7px;color:#ABABAB;">Format Painter</span>
<span style="left:68.30px;top:42px;font-size:4.70px;line-height:7px;color:#484848;">New</span>
<span style="left:66.60px;top:48px;font-size:4.68px;line-height:7px;color:#484848;">Slide</span>
<span style="left:90.60px;top:28px;font-size:4.66px;line-height:7px;color:#484848;">Layout</span>
<span style="left:90.60px;top:37px;font-size:4.50px;line-height:7px;color:#484848;letter-spacing:-0.191px;">Reset</span>
<span style="left:90.60px;top:47px;font-size:4.50px;line-height:7px;color:#484848;letter-spacing:-0.001px;">Section</span>
<span style="left:117.00px;top:31px;font-size:4.56px;line-height:7px;color:#484848;">Calibri (Body)</span>
<span style="left:170.40px;top:31px;font-size:4.50px;line-height:7px;color:#484848;letter-spacing:-0.203px;">18</span>
<span style="left:189.20px;top:30px;font-size:5.60px;line-height:8px;color:#484848;">A</span>
<span style="left:198.60px;top:32px;font-size:4.60px;line-height:7px;color:#484848;">A</span>
<span style="left:209.80px;top:30px;font-size:4.40px;line-height:7px;color:#666;">A</span>
<span style="left:117.47px;top:43px;font-size:4.80px;line-height:7px;color:#3C3C3C;font-weight:bold;">B</span>
<span style="left:127.63px;top:43px;font-size:4.80px;line-height:7px;color:#3C3C3C;font-style:italic;font-family:"Liberation Serif",serif;">I</span>
<span style="left:135.67px;top:43px;font-size:4.80px;line-height:7px;color:#3C3C3C;">U</span>
<span style="left:144.70px;top:43px;font-size:4.80px;line-height:7px;color:#3C3C3C;">S</span>
<span style="left:151.17px;top:43px;font-size:4.50px;line-height:7px;color:#3C3C3C;">abc</span>
<span style="left:160.90px;top:43px;font-size:4.60px;line-height:7px;color:#3C3C3C;">AV</span>
<span style="left:174.06px;top:43px;font-size:4.80px;line-height:7px;color:#3C3C3C;">Aa</span>
<span style="left:205.80px;top:43px;font-size:4.80px;line-height:7px;color:#3C3C3C;">A</span>
<span style="left:289.93px;top:30px;font-size:3.80px;line-height:6px;color:#555;">A</span>
<span style="left:295.00px;top:28px;font-size:4.72px;line-height:7px;color:#484848;">Text Direction</span>
<span style="left:295.00px;top:37px;font-size:4.77px;line-height:7px;color:#484848;">Align Text</span>
<span style="left:295.00px;top:47px;font-size:4.78px;line-height:7px;color:#ABABAB;">Convert to SmartArt</span>
<span style="left:403.80px;top:42px;font-size:4.67px;line-height:7px;color:#484848;">Arrange</span>
<span style="left:424.40px;top:42px;font-size:4.85px;line-height:7px;color:#484848;">Quick</span>
<span style="left:423.00px;top:48px;font-size:4.50px;line-height:7px;color:#484848;letter-spacing:-0.009px;">Styles</span>
<span style="left:448.00px;top:28px;font-size:4.86px;line-height:7px;color:#484848;">Shape Fill</span>
<span style="left:448.00px;top:37px;font-size:4.83px;line-height:7px;color:#484848;">Shape Outline</span>
<span style="left:448.00px;top:47px;font-size:4.77px;line-height:7px;color:#484848;">Shape Effects</span>
<span style="left:495.00px;top:28px;font-size:4.63px;line-height:7px;color:#484848;">Find</span>
<span style="left:487.60px;top:37px;font-size:3.60px;line-height:6px;color:#3B78C4;">a</span>
<span style="left:490.50px;top:39px;font-size:3.60px;line-height:6px;color:#8A5FB4;">c</span>
<span style="left:495.00px;top:37px;font-size:4.52px;line-height:7px;color:#484848;">Replace</span>
<span style="left:495.00px;top:47px;font-size:4.53px;line-height:7px;color:#484848;">Select</span>
<span style="left:523.70px;top:42px;font-size:4.69px;line-height:7px;color:#484848;">Dictate</span>
<span style="left:4.00px;top:67px;font-size:4.50px;line-height:7px;color:#B3B3B3;letter-spacing:-0.039px;">AutoSave</span>
<span style="left:34.20px;top:67px;font-size:3.80px;line-height:6px;color:#C4C4C4;">Off</span>
<span style="left:147.40px;top:66px;font-size:4.80px;line-height:7px;color:#444;">A</span>
<span style="left:160.01px;top:66px;font-size:5.00px;line-height:8px;color:#444;font-weight:bold;">x</span>
<span style="left:163.37px;top:69px;font-size:3.00px;line-height:6px;color:#3B78C4;">2</span>
<span style="left:171.81px;top:66px;font-size:5.00px;line-height:8px;color:#444;font-weight:bold;">x</span>
<span style="left:175.37px;top:65px;font-size:3.00px;line-height:6px;color:#3B78C4;">2</span>
<span style="left:3.20px;top:408px;font-size:4.52px;line-height:7px;color:#555;">Slide 1 of 1</span>
<span style="left:46.00px;top:408px;font-size:4.64px;line-height:7px;color:#555;">English (United Kingdom)</span>
<span style="left:609.00px;top:408px;font-size:4.75px;line-height:7px;color:#444;">Notes</span>
<span style="left:744.00px;top:408px;font-size:4.93px;line-height:7px;color:#555;">108%</span>
<span style="left:35.40px;top:420px;font-size:5.72px;line-height:8px;color:#3C3C3C;">Type here to search</span>
<span style="left:222.13px;top:413px;font-size:15.00px;line-height:19px;color:#1C86E8;font-weight:bold;">e</span>
<span style="left:282.82px;top:420px;font-size:5.00px;line-height:8px;color:#FF4FA0;">Id</span>
<span style="left:300.66px;top:420px;font-size:5.00px;line-height:8px;color:#FFF;font-weight:bold;">O</span>
<span style="left:320.63px;top:420px;font-size:5.00px;line-height:8px;color:#FFF;font-weight:bold;">X</span>
<span style="left:361.12px;top:420px;font-size:5.20px;line-height:8px;color:#FFF;">sl</span>
<span style="left:380.38px;top:420px;font-size:5.00px;line-height:8px;color:#FF8C1A;">Ai</span>
<span style="left:419.37px;top:420px;font-size:5.00px;line-height:8px;color:#FFF;font-weight:bold;">T</span>
<span style="left:424.97px;top:424px;font-size:3.00px;line-height:6px;color:#FFF;">1</span>
<span style="left:438.33px;top:420px;font-size:5.00px;line-height:8px;color:#FFF;font-weight:bold;">P</span>
<span style="left:457.63px;top:421px;font-size:4.60px;line-height:7px;color:#FFF;font-weight:bold;">W</span>
<span style="left:706.80px;top:421px;font-size:4.50px;line-height:7px;color:#F0F0F0;letter-spacing:-0.117px;">ENG</span>
<span style="left:727.00px;top:417px;font-size:4.80px;line-height:7px;color:#F4F4F4;">13:30</span>
<span style="left:721.10px;top:424px;font-size:4.68px;line-height:7px;color:#F4F4F4;">25/07/2018</span>
<span style="left:755.51px;top:424px;font-size:3.40px;line-height:6px;color:#EEE;">20</span>
</section>
<section style="position:absolute;left:0;top:0;width:768px;height:432px;z-index:4;will-change:transform;">
<div style="left:402.8px;top:54.2px;width:58px;height:125.6px;background:#FFFFFF;border:0.6px solid #C8C8C8;box-shadow:0.8px 0.8px 1.6px rgba(0,0,0,0.22);"></div>
<div style="left:403.4px;top:54.8px;width:56.8px;height:9.2px;background:#EEEEEE;"></div>
<div style="left:403.4px;top:102.6px;width:56.8px;height:8.8px;background:#EEEEEE;"></div>
<div style="left:403.4px;top:140.6px;width:56.8px;height:8.8px;background:#EEEEEE;"></div>
<div style="left:403.4px;top:121.8px;width:56.8px;height:8.8px;background:#C6C6C6;"></div>
<span style="left:407.00px;top:57px;font-size:4.62px;line-height:7px;color:#4A4A4A;font-weight:bold;">Order Objects</span>
<span style="left:407.00px;top:104px;font-size:4.52px;line-height:7px;color:#4A4A4A;font-weight:bold;">Group Objects</span>
<span style="left:407.00px;top:142px;font-size:4.64px;line-height:7px;color:#4A4A4A;font-weight:bold;">Position Objects</span>
<span style="left:416.40px;top:66px;font-size:4.82px;line-height:7px;color:#585858;">Bring to F<u>r</u>ont</span>
<span style="left:416.40px;top:76px;font-size:4.57px;line-height:7px;color:#585858;">Send to Bac<u>k</u></span>
<span style="left:416.40px;top:85px;font-size:4.68px;line-height:7px;color:#585858;">Bring <u>F</u>orward</span>
<span style="left:416.40px;top:95px;font-size:4.54px;line-height:7px;color:#585858;">Send <u>B</u>ackward</span>
<span style="left:416.40px;top:113px;font-size:4.53px;line-height:7px;color:#ABABAB;"><u>G</u>roup</span>
<span style="left:416.40px;top:123px;font-size:4.54px;line-height:7px;color:#333;"><u>U</u>ngroup</span>
<span style="left:416.40px;top:133px;font-size:4.50px;line-height:7px;color:#ABABAB;letter-spacing:-0.009px;">R<u>e</u>group</span>
<span style="left:416.40px;top:151px;font-size:4.77px;line-height:7px;color:#585858;"><u>A</u>lign</span>
<span style="left:416.40px;top:161px;font-size:4.62px;line-height:7px;color:#585858;">R<u>o</u>tate</span>
<span style="left:416.40px;top:171px;font-size:4.81px;line-height:7px;color:#585858;">Selection <u>P</u>ane...</span>
</section>
<section style="position:absolute;left:0;top:0;width:768px;height:432px;z-index:5;will-change:transform;">
<svg viewBox="0 0 768 432">
<rect x="405.2" y="66.2" width="2.6" height="2.4" fill="#FFFFFF" stroke="#8A8A8A" stroke-width="0.4" rx="0" />
<rect x="409.2" y="69.6" width="2.6" height="2.4" fill="#FFFFFF" stroke="#8A8A8A" stroke-width="0.4" rx="0" />
<rect x="406.59999999999997" y="67.4" width="3.8" height="3.6" fill="#F0C36E"  rx="0" />
<rect x="406.59999999999997" y="77.0" width="3.8" height="3.6" fill="#F0C36E"  rx="0" />
<rect x="405.2" y="75.8" width="2.8" height="2.6" fill="#FFFFFF" stroke="#8A8A8A" stroke-width="0.4" rx="0" />
<rect x="409.0" y="79.0" width="2.8" height="2.6" fill="#FFFFFF" stroke="#8A8A8A" stroke-width="0.4" rx="0" />
<rect x="408.59999999999997" y="87.8" width="3.0" height="3.0" fill="#FFFFFF" stroke="#8A8A8A" stroke-width="0.4" rx="0" />
<rect x="405.4" y="85.2" width="4.6" height="4.4" fill="#F0C36E"  rx="0" />
<rect x="405.4" y="94.9" width="4.6" height="4.4" fill="#F0C36E"  rx="0" />
<rect x="408.2" y="97.10000000000001" width="3.4" height="3.4" fill="#FFFFFF" stroke="#8A8A8A" stroke-width="0.4" rx="0" />
<rect x="405.59999999999997" y="113.5" width="5.6" height="5.6" fill="none" stroke="#C2C2C2" stroke-width="0.45" rx="0" stroke-dasharray="0.9 0.6"/>
<rect x="406.5" y="114.39999999999999" width="2.3" height="2.3" fill="#F2F2F2" stroke="#C2C2C2" stroke-width="0.4" rx="0" />
<rect x="408.09999999999997" y="116.0" width="2.3" height="2.3" fill="#F2F2F2" stroke="#C2C2C2" stroke-width="0.4" rx="0" />
<rect x="405.59999999999997" y="123.4" width="5.6" height="5.6" fill="none" stroke="#5A5A5A" stroke-width="0.45" rx="0" stroke-dasharray="0.9 0.6"/>
<rect x="406.5" y="124.3" width="2.3" height="2.3" fill="#F2F2F2" stroke="#5A5A5A" stroke-width="0.4" rx="0" />
<rect x="408.09999999999997" y="125.9" width="2.3" height="2.3" fill="#F2F2F2" stroke="#5A5A5A" stroke-width="0.4" rx="0" />
<rect x="404.99999999999994" y="122.80000000000001" width="1.2" height="1.2" fill="#FFFFFF" stroke="#5A5A5A" stroke-width="0.35" rx="0" />
<rect x="410.59999999999997" y="122.80000000000001" width="1.2" height="1.2" fill="#FFFFFF" stroke="#5A5A5A" stroke-width="0.35" rx="0" />
<rect x="404.99999999999994" y="128.4" width="1.2" height="1.2" fill="#FFFFFF" stroke="#5A5A5A" stroke-width="0.35" rx="0" />
<rect x="410.59999999999997" y="128.4" width="1.2" height="1.2" fill="#FFFFFF" stroke="#5A5A5A" stroke-width="0.35" rx="0" />
<rect x="405.59999999999997" y="132.89999999999998" width="5.6" height="5.6" fill="none" stroke="#C2C2C2" stroke-width="0.45" rx="0" stroke-dasharray="0.9 0.6"/>
<rect x="406.5" y="133.79999999999998" width="2.3" height="2.3" fill="#F2F2F2" stroke="#C2C2C2" stroke-width="0.4" rx="0" />
<rect x="408.09999999999997" y="135.39999999999998" width="2.3" height="2.3" fill="#F2F2F2" stroke="#C2C2C2" stroke-width="0.4" rx="0" />
<rect x="406.4" y="151.8" width="3.6" height="1.9" fill="#F0C36E"  rx="0" />
<rect x="406.4" y="154.9" width="2.4" height="1.9" fill="#F0C36E"  rx="0" />
<line x1="406" y1="151" x2="406" y2="157.6" stroke="#6A6A6A" stroke-width="0.5" />
<path d="M409.6 156.4H411.4M410.6 155.6L411.4 156.4L410.6 157.2" fill="none" stroke="#3B78C4" stroke-width="0.45" />
<path d="M405.6 166.2L408 161.8V166.2Z" fill="none" stroke="#6A6A6A" stroke-width="0.45" />
<path d="M409 166.2V161.8L411.4 166.2Z" fill="#6A6A6A"  />
<path d="M406.8 161.2C407.6 160.4 409 160.4 409.8 161.2" fill="none" stroke="#3B78C4" stroke-width="0.45" />
<rect x="405.6" y="170.6" width="2.6" height="2.4" fill="none" stroke="#6A6A6A" stroke-width="0.4" rx="0" />
<rect x="405.6" y="174.2" width="2.6" height="2.4" fill="none" stroke="#6A6A6A" stroke-width="0.4" rx="0" />
<path d="M409.2 171.6L411.6 174.2M411.4 171.4L409.4 174" fill="none" stroke="#D9A93A" stroke-width="0.5" />
<rect x="409.4" y="174.6" width="2.2" height="2.0" fill="none" stroke="#6A6A6A" stroke-width="0.4" rx="0" />
</svg>
</section>
<section style="position:absolute;left:0;top:0;width:768px;height:432px;z-index:7;will-change:transform;">
<div style="left:437.4px;top:134px;width:86.2px;height:33.2px;background:#FFFFFF;border:0.6px solid #C9C9C9;box-shadow:0.8px 0.8px 1.8px rgba(0,0,0,0.2);"></div>
<span style="left:442.60px;top:137px;font-size:4.56px;line-height:7px;color:#444;font-weight:bold;">Ungroup</span>
<span style="left:442.60px;top:146px;font-size:4.73px;line-height:7px;color:#5E5E5E;">Break the connection between</span>
<span style="left:442.60px;top:152px;font-size:4.75px;line-height:7px;color:#5E5E5E;">grouped objects so that you can</span>
<span style="left:442.60px;top:158px;font-size:4.83px;line-height:7px;color:#5E5E5E;">move them individually again.</span>
</section>
</div></body></html>
